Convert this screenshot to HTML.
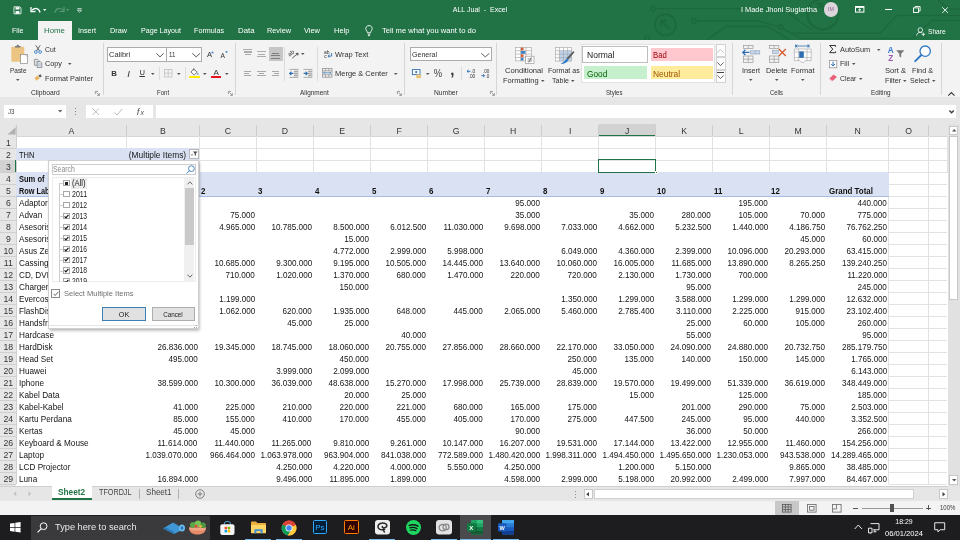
<!DOCTYPE html>
<html lang="en"><head><meta charset="utf-8"><title>ALL Jual - Excel</title>
<style>
html,body{margin:0;padding:0;}
body{width:960px;height:540px;overflow:hidden;position:relative;background:#fff;font-family:"Liberation Sans", sans-serif;}
#root{position:absolute;left:0;top:0;width:960px;height:540px;overflow:hidden;will-change:transform;}
.a{position:absolute;box-sizing:border-box;}
.t{position:absolute;white-space:pre;font-family:"Liberation Sans", sans-serif;}
svg{overflow:visible;}
</style></head><body><div id="root">
<div class="a" style="left:0px;top:0px;width:960px;height:40px;background:#217346;"></div>
<svg class="a" style="left:0px;top:0px;overflow:hidden;" width="960" height="40" viewBox="0 0 960 40"><g fill="none" stroke="#1c693e" stroke-width="1.5" stroke-linejoin="round">
<circle cx="653" cy="8.5" r="2.2"/><path d="M655.3 8.5 H784 L800 22 L812 30"/>
<circle cx="665.4" cy="24.8" r="10.5" stroke-width="2"/>
<path d="M669.5 29 L661.5 21 M661 26.5 V20.5 H667" stroke-width="2.2"/>
<circle cx="694" cy="20.7" r="2.2"/><path d="M696.3 20.7 H757.5 L778.5 26.6"/><circle cx="780.6" cy="27" r="2.2"/><path d="M782.5 28.2 L800 38"/>
<path d="M707 40 L725.6 26.6 H768 L790 40"/>
<circle cx="647" cy="38.5" r="2.2"/>
<circle cx="822.8" cy="14" r="15.5" stroke-width="2.4"/>
<path d="M813 12 L822 4 M816 3.5 H822.5 V10" stroke-width="2.2"/>
<path d="M790 33.2 H880 L897 15.6 H960"/>
<path d="M800 38.6 H912 L932 20.5 H960"/>
<path d="M938 0 L950 9 H960"/>
</g></svg>
<span class="t" id="t1" style="top:5.30px;font-size:7.5px;line-height:10px;color:#fff;left:479.8px;transform-origin:50% 50%;transform:translateX(-50%) scaleX(0.9381);">ALL Jual  -  Excel</span>
<span class="t" id="t2" style="top:4.80px;font-size:7.6px;line-height:10px;color:#fff;left:741px;transform-origin:0 50%;transform:scaleX(0.9730);">I Made Jhoni Sugiartha</span>
<div class="a" style="left:823.6px;top:1.8px;width:14.8px;height:14.8px;background:#dcd6dc;border-radius:50%;"></div>
<span class="t" id="t3" style="top:5.40px;font-size:5.4px;line-height:8px;color:#8c5f96;left:831px;transform-origin:50% 50%;transform:translateX(-50%);">IM</span>
<svg class="a" style="left:13px;top:6px;" width="9" height="8.6" viewBox="0 0 11 11"><path d="M1 1 H8.5 L10 2.5 V10 H1 Z" fill="none" stroke="#fff" stroke-width="1"/><rect x="3" y="1.5" width="5" height="3" fill="#fff"/><rect x="3" y="6.5" width="5" height="3.5" fill="#fff"/></svg>
<svg class="a" style="left:30px;top:5px;" width="12" height="11" viewBox="0 0 12 11"><path d="M2 5 C5 2.5 9 3 10 7.5" fill="none" stroke="#fff" stroke-width="1.3"/><path d="M1 2 V6.5 H5.5" fill="none" stroke="#fff" stroke-width="1.3"/></svg>
<svg class="a" style="left:43px;top:9px;" width="4" height="3" viewBox="0 0 4 3"><path d="M0 0 H3.4 L1.7 2 Z" fill="#fff"/></svg>
<svg class="a" style="left:53px;top:5px;" width="12" height="11" viewBox="0 0 12 11"><path d="M10 5 C7 2.5 3 3 2 7.5" fill="none" stroke="#5d9a78" stroke-width="1.2"/><path d="M11 2 V6.5 H6.5" fill="none" stroke="#5d9a78" stroke-width="1.2"/></svg>
<svg class="a" style="left:66px;top:9px;" width="4" height="3" viewBox="0 0 4 3"><path d="M0 0 H3.4 L1.7 2 Z" fill="#5d9a78"/></svg>
<svg class="a" style="left:77.3px;top:8px;" width="5.4" height="5.4" viewBox="0 0 7 7"><path d="M0.5 0.8 H6" stroke="#fff" stroke-width="0.9"/><path d="M0.5 2.8 H6 L3.25 5.5 Z" fill="none" stroke="#fff" stroke-width="0.9"/></svg>
<svg class="a" style="left:854.6px;top:6.2px;" width="9.4" height="6.6" viewBox="0 0 9.4 6.6"><rect x="0.5" y="0.5" width="8.4" height="5.6" fill="none" stroke="#fff" stroke-width="1"/><rect x="0.5" y="0.5" width="8.4" height="1.4" fill="#fff"/><path d="M4.7 5.6 V3 M3.3 4.2 L4.7 2.8 L6.1 4.2" stroke="#fff" fill="none" stroke-width="0.9"/></svg>
<div class="a" style="left:884.7px;top:9.3px;width:7.7px;height:0.9px;background:#fff;"></div>
<svg class="a" style="left:913.4px;top:6px;" width="7.6" height="7" viewBox="0 0 7.6 7"><rect x="0.5" y="1.9" width="5" height="4.6" fill="none" stroke="#fff" stroke-width="0.9"/><path d="M2.1 1.9 V0.5 H7.1 V5 H5.5" fill="none" stroke="#fff" stroke-width="0.9"/></svg>
<svg class="a" style="left:942.3px;top:6.6px;" width="6.2" height="6.2" viewBox="0 0 6.2 6.2"><path d="M0.3 0.3 L5.9 5.9 M5.9 0.3 L0.3 5.9" stroke="#fff" stroke-width="0.9"/></svg>
<div class="a" style="left:38px;top:21px;width:33.5px;height:19px;background:#f3f3f3;"></div>
<span class="t" id="t4" style="top:26.10px;font-size:7.5px;line-height:10px;color:#fff;left:12px;transform-origin:0 50%;transform:scaleX(0.9509);">File</span>
<span class="t" id="t5" style="top:26.10px;font-size:7.5px;line-height:10px;color:#fff;left:78px;transform-origin:0 50%;transform:scaleX(0.9592);">Insert</span>
<span class="t" id="t6" style="top:26.10px;font-size:7.5px;line-height:10px;color:#fff;left:110px;transform-origin:0 50%;transform:scaleX(0.9706);">Draw</span>
<span class="t" id="t7" style="top:26.10px;font-size:7.5px;line-height:10px;color:#fff;left:140.5px;transform-origin:0 50%;transform:scaleX(0.9496);">Page Layout</span>
<span class="t" id="t8" style="top:26.10px;font-size:7.5px;line-height:10px;color:#fff;left:194px;transform-origin:0 50%;transform:scaleX(0.9595);">Formulas</span>
<span class="t" id="t9" style="top:26.10px;font-size:7.5px;line-height:10px;color:#fff;left:237.5px;transform-origin:0 50%;transform:scaleX(1.0414);">Data</span>
<span class="t" id="t10" style="top:26.10px;font-size:7.5px;line-height:10px;color:#fff;left:267px;transform-origin:0 50%;transform:scaleX(0.9759);">Review</span>
<span class="t" id="t11" style="top:26.10px;font-size:7.5px;line-height:10px;color:#fff;left:304px;transform-origin:0 50%;transform:scaleX(0.9922);">View</span>
<span class="t" id="t12" style="top:26.10px;font-size:7.5px;line-height:10px;color:#fff;left:333.5px;transform-origin:0 50%;transform:scaleX(1.0040);">Help</span>
<span class="t" id="t13" style="top:26.10px;font-size:7.5px;line-height:10px;color:#fff;left:381.5px;transform-origin:0 50%;transform:scaleX(1.0155);">Tell me what you want to do</span>
<span class="t" id="t14" style="top:26.10px;font-size:7.5px;line-height:10px;color:#217346;left:44px;transform-origin:0 50%;transform:scaleX(1.0492);">Home</span>
<svg class="a" style="left:365px;top:25px;" width="8" height="12" viewBox="0 0 8 12"><path d="M4 0.6 C1.8 0.6 0.8 2.2 0.8 3.6 C0.8 5.3 2.3 6 2.5 7.8 H5.5 C5.7 6 7.2 5.3 7.2 3.6 C7.2 2.2 6.2 0.6 4 0.6 Z M2.7 9.2 H5.3 M3 10.6 H5" fill="none" stroke="#fff" stroke-width="0.9"/></svg>
<svg class="a" style="left:916.4px;top:26.8px;" width="10.4" height="9.5" viewBox="0 0 12 11"><circle cx="5" cy="3.5" r="2.6" fill="none" stroke="#fff" stroke-width="0.9"/><path d="M0.8 10 C0.8 7 3 6.3 5 6.3 C6 6.3 6.8 6.5 7.4 6.9" fill="none" stroke="#fff" stroke-width="0.9"/><path d="M8.5 6.5 V10.5 M6.5 8.5 H10.5" stroke="#fff" stroke-width="0.9"/></svg>
<span class="t" id="t15" style="top:26.90px;font-size:7.6px;line-height:10px;color:#fff;left:928.1px;transform-origin:0 50%;transform:scaleX(0.8734);">Share</span>
<div class="a" style="left:0px;top:40px;width:960px;height:57px;background:#f3f3f3;"></div>
<div class="a" style="left:0px;top:97px;width:960px;height:1.2px;background:linear-gradient(#e9e9e9,#e2e2e2);"></div>
<div class="a" style="left:0px;top:97.8px;width:960px;height:27px;background:#e6e6e6;"></div>
<svg class="a" style="left:11px;top:44px;" width="17" height="20" viewBox="0 0 17 20"><rect x="0.3" y="2.8" width="13" height="15" rx="0.8" fill="#ecc583"/><path d="M4 3.4 V2 H5.6 C5.6 0.4 8 0.4 8 2 H9.6 V3.4 Z" fill="#7a7a7a"/><rect x="9.6" y="10.4" width="6.8" height="9.2" fill="#fff" stroke="#8a8a8a" stroke-width="0.7"/><path d="M14 10.4 L16.4 12.8" stroke="#8a8a8a" stroke-width="0.6"/></svg>
<span class="t" id="t16" style="top:64.90px;font-size:7.7px;line-height:11px;color:#303030;left:9.7px;transform-origin:0 50%;transform:scaleX(0.8388);">Paste</span>
<svg class="a" style="left:16.2px;top:79.3px;" width="3.6" height="2.2" viewBox="0 0 3.6 2.2"><path d="M0 0 H3.6 L1.8 2.1 Z" fill="#555"/></svg>
<svg class="a" style="left:33.5px;top:44.8px;" width="8" height="9" viewBox="0 0 8 9"><path d="M1.8 0.3 L5.6 6 M6.2 0.3 L2.4 6" stroke="#555" stroke-width="0.9"/><circle cx="1.9" cy="7" r="1.4" fill="none" stroke="#3f84c5" stroke-width="0.9"/><circle cx="6.1" cy="7" r="1.4" fill="none" stroke="#3f84c5" stroke-width="0.9"/></svg>
<span class="t" id="t17" style="top:43.90px;font-size:7.7px;line-height:11px;color:#303030;left:45px;transform-origin:0 50%;transform:scaleX(0.8856);">Cut</span>
<svg class="a" style="left:33.5px;top:58.8px;" width="8.5" height="9" viewBox="0 0 8.5 9"><path d="M0.4 0.4 H3.6 L5 1.8 V6.2 H0.4 Z" fill="#e6ebf1" stroke="#767676" stroke-width="0.7"/><path d="M1.4 2.4 H3.6 M1.4 4 H2.6" stroke="#8a9bb0" stroke-width="0.5"/><path d="M3.2 2.6 H6.4 L7.8 4 V8.5 H3.2 Z" fill="#dce5ef" stroke="#767676" stroke-width="0.7"/><path d="M4.2 5 H6.8 M4.2 6.4 H6.8" stroke="#8a9bb0" stroke-width="0.5"/></svg>
<span class="t" id="t18" style="top:58.30px;font-size:7.7px;line-height:11px;color:#303030;left:45px;transform-origin:0 50%;transform:scaleX(0.9469);">Copy</span>
<svg class="a" style="left:68.2px;top:62.8px;" width="3.6" height="2.2" viewBox="0 0 3.6 2.2"><path d="M0 0 H3.6 L1.8 2.1 Z" fill="#555"/></svg>
<svg class="a" style="left:34px;top:74.3px;" width="8.5" height="7.5" viewBox="0 0 8.5 7.5"><path d="M0.5 4 L3.8 1.6 L5.6 4.2 L2.4 6.8 Z" fill="#e9b65f"/><path d="M4.4 1.6 L6.4 0.3 L7.8 2.2 L5.9 3.6 Z" fill="#555"/></svg>
<span class="t" id="t19" style="top:72.60px;font-size:7.7px;line-height:11px;color:#303030;left:45px;transform-origin:0 50%;transform:scaleX(0.9460);">Format Painter</span>
<span class="t" id="t20" style="top:87.00px;font-size:7.7px;line-height:11px;color:#303030;left:31.2px;transform-origin:0 50%;transform:scaleX(0.8752);">Clipboard</span>
<svg class="a" style="left:95.2px;top:90.6px;" width="5" height="5" viewBox="0 0 5 5"><path d="M0.4 3 V0.4 H3" fill="none" stroke="#777" stroke-width="0.7"/><path d="M1.6 1.6 L4.2 4.2 M4.4 2.2 V4.4 H2.2" fill="none" stroke="#777" stroke-width="0.7"/></svg>
<div class="a" style="left:102.5px;top:43px;width:0.8px;height:51.5px;background:#d6d6d6;"></div>
<div class="a" style="left:107.3px;top:47px;width:59.3px;height:14.6px;background:#fff;border:0.7px solid #ababab;"></div>
<div class="a" style="left:166.2px;top:47px;width:36.3px;height:14.6px;background:#fff;border:0.7px solid #ababab;"></div>
<span class="t" id="t21" style="top:48.80px;font-size:7.7px;line-height:11px;color:#303030;left:109px;transform-origin:0 50%;transform:scaleX(0.9772);">Calibri</span>
<svg class="a" style="left:156px;top:52.8px;" width="8" height="4.200000000000003" viewBox="0 0 8 4.200000000000003"><path d="M0.3 0.3 L4.0 3.900000000000003 L7.7 0.3" fill="none" stroke="#444" stroke-width="0.9"/></svg>
<span class="t" id="t22" style="top:48.80px;font-size:7.7px;line-height:11px;color:#303030;left:168.8px;transform-origin:0 50%;transform:scaleX(0.8016);">11</span>
<svg class="a" style="left:192px;top:52.8px;" width="8.400000000000006" height="4.200000000000003" viewBox="0 0 8.400000000000006 4.200000000000003"><path d="M0.3 0.3 L4.200000000000003 3.900000000000003 L8.100000000000005 0.3" fill="none" stroke="#444" stroke-width="0.9"/></svg>
<span class="t" id="t23" style="top:49.60px;font-size:7.6px;line-height:10px;color:#303030;left:207px;transform-origin:0 50%;">A</span>
<svg class="a" style="left:211.4px;top:50.6px;" width="3" height="2.4" viewBox="0 0 3 2.4"><path d="M0 2.2 L1.5 0.2 L3 2.2 Z" fill="#3f84c5"/></svg>
<span class="t" id="t24" style="top:50.50px;font-size:6.6px;line-height:9px;color:#303030;left:220.6px;transform-origin:0 50%;">A</span>
<svg class="a" style="left:224.6px;top:50.8px;" width="3" height="2.4" viewBox="0 0 3 2.4"><path d="M0 0.2 L1.5 2.2 L3 0.2 Z" fill="#3f84c5"/></svg>
<span class="t" id="t25" style="top:68.10px;font-size:7.8px;line-height:11px;color:#333;font-weight:bold;left:114px;transform-origin:50% 50%;transform:translateX(-50%);">B</span>
<span class="t" id="t26" style="top:66.90px;font-size:9.6px;line-height:13px;color:#333;font-style:italic;left:128.6px;transform-origin:50% 50%;transform:translateX(-50%);font-family:"Liberation Serif",serif;font-weight:bold;-webkit-text-stroke:0.3px #333;">I</span>
<span class="t" id="t27" style="top:68.40px;font-size:7.6px;line-height:10px;color:#333;left:142.2px;transform-origin:50% 50%;transform:translateX(-50%);text-decoration:underline;">U</span>
<svg class="a" style="left:151.2px;top:72.8px;" width="3.6" height="2.2" viewBox="0 0 3.6 2.2"><path d="M0 0 H3.6 L1.8 2.1 Z" fill="#555"/></svg>
<div class="a" style="left:159.3px;top:67px;width:0.8px;height:13px;background:#dcdcdc;"></div>
<svg class="a" style="left:164.2px;top:69.3px;" width="8.4" height="8.4" viewBox="0 0 8.4 8.4"><g fill="none" stroke="#c1c1c1" stroke-width="0.8"><rect x="0.4" y="0.4" width="7.6" height="7.6"/><path d="M4.2 0.4 V8 M0.4 4.2 H8"/></g></svg>
<svg class="a" style="left:177.0px;top:72.8px;" width="3.6" height="2.2" viewBox="0 0 3.6 2.2"><path d="M0 0 H3.6 L1.8 2.1 Z" fill="#555"/></svg>
<div class="a" style="left:185.2px;top:67px;width:0.8px;height:13px;background:#dcdcdc;"></div>
<svg class="a" style="left:190.3px;top:68.2px;" width="9.5" height="7.5" viewBox="0 0 9.5 7.5"><path d="M3.6 1 L7.2 4.2 L4.2 7 L1 4 Z" fill="#fff" stroke="#555" stroke-width="0.8"/><path d="M3.8 2.6 V0.2" stroke="#555" stroke-width="0.7"/><path d="M7.8 4.4 C8.8 5.8 8.8 6.8 7.9 6.8 C7 6.8 7 5.8 7.8 4.4 Z" fill="#3f84c5"/></svg>
<div class="a" style="left:189.3px;top:75.8px;width:10.7px;height:2.4px;background:#ffeb00;"></div>
<svg class="a" style="left:203.2px;top:72.8px;" width="3.6" height="2.2" viewBox="0 0 3.6 2.2"><path d="M0 0 H3.6 L1.8 2.1 Z" fill="#555"/></svg>
<span class="t" id="t28" style="top:66.80px;font-size:8px;line-height:11px;color:#333;left:216.2px;transform-origin:50% 50%;transform:translateX(-50%);">A</span>
<div class="a" style="left:211px;top:75.8px;width:10px;height:2.4px;background:#e81123;"></div>
<svg class="a" style="left:224.79999999999998px;top:72.8px;" width="3.6" height="2.2" viewBox="0 0 3.6 2.2"><path d="M0 0 H3.6 L1.8 2.1 Z" fill="#555"/></svg>
<span class="t" id="t29" style="top:87.00px;font-size:7.7px;line-height:11px;color:#303030;left:157.2px;transform-origin:0 50%;transform:scaleX(0.7862);">Font</span>
<svg class="a" style="left:228.3px;top:90.6px;" width="5" height="5" viewBox="0 0 5 5"><path d="M0.4 3 V0.4 H3" fill="none" stroke="#777" stroke-width="0.7"/><path d="M1.6 1.6 L4.2 4.2 M4.4 2.2 V4.4 H2.2" fill="none" stroke="#777" stroke-width="0.7"/></svg>
<div class="a" style="left:235.4px;top:43px;width:0.8px;height:51.5px;background:#d6d6d6;"></div>
<div class="a" style="left:243.0px;top:49.3px;width:9px;height:1.15px;background:#acacac;"></div>
<div class="a" style="left:243.5px;top:51.4px;width:8px;height:1.15px;background:#acacac;"></div>
<div class="a" style="left:244.5px;top:53.5px;width:6px;height:1.15px;background:#acacac;"></div>
<div class="a" style="left:256.8px;top:51.2px;width:9.2px;height:1.15px;background:#acacac;"></div>
<div class="a" style="left:258.2px;top:53.5px;width:6.4px;height:1.15px;background:#acacac;"></div>
<div class="a" style="left:256.8px;top:55.800000000000004px;width:9.2px;height:1.15px;background:#acacac;"></div>
<div class="a" style="left:268.5px;top:47.1px;width:14.1px;height:14.1px;background:#c6c6c6;"></div>
<div class="a" style="left:272.4px;top:53.1px;width:6.4px;height:1.15px;background:#7e7e7e;"></div>
<div class="a" style="left:271.0px;top:55.300000000000004px;width:9.2px;height:1.15px;background:#7e7e7e;"></div>
<div class="a" style="left:271.0px;top:57.5px;width:9.2px;height:1.15px;background:#7e7e7e;"></div>
<div class="a" style="left:284.4px;top:47px;width:0.8px;height:33.5px;background:#dcdcdc;"></div>
<svg class="a" style="left:289px;top:50px;" width="9.6" height="8.4" viewBox="0 0 9.6 8.4"><text x="0.2" y="5.6" font-size="6" fill="#3a3a3a" font-family="Liberation Sans, sans-serif" transform="rotate(-38 2 5.6)">ab</text><path d="M3.2 8.2 L9 3.4 M9.2 3.2 L6.8 3.5 M9.2 3.2 L8.7 5.6" stroke="#3a3a3a" stroke-width="0.8" fill="none"/></svg>
<svg class="a" style="left:301.4px;top:53px;" width="3.6" height="2.2" viewBox="0 0 3.6 2.2"><path d="M0 0 H3.6 L1.8 2.1 Z" fill="#555"/></svg>
<div class="a" style="left:244px;top:70.8px;width:7px;height:1.15px;background:#a8a8a8;"></div>
<div class="a" style="left:244px;top:72.85px;width:5.2px;height:1.15px;background:#a8a8a8;"></div>
<div class="a" style="left:244px;top:74.89999999999999px;width:7px;height:1.15px;background:#a8a8a8;"></div>
<div class="a" style="left:257.4px;top:70.8px;width:8.4px;height:1.15px;background:#a8a8a8;"></div>
<div class="a" style="left:258.9px;top:72.85px;width:5.4px;height:1.15px;background:#a8a8a8;"></div>
<div class="a" style="left:257.4px;top:74.89999999999999px;width:8.4px;height:1.15px;background:#a8a8a8;"></div>
<div class="a" style="left:271.8px;top:70.8px;width:7px;height:1.15px;background:#a8a8a8;"></div>
<div class="a" style="left:273.6px;top:72.85px;width:5.2px;height:1.15px;background:#a8a8a8;"></div>
<div class="a" style="left:271.8px;top:74.89999999999999px;width:7px;height:1.15px;background:#a8a8a8;"></div>
<svg class="a" style="left:289px;top:69.2px;" width="9.6" height="8.8" viewBox="0 0 9.6 8.8"><rect x="5" y="0.6" width="4.2" height="7.6" fill="#d9d9d9"/><g stroke="#9a9a9a" stroke-width="0.8"><path d="M0.4 0.4 H9.4 M0.4 8.4 H9.4 M5 2.6 H9.4 M5 4.6 H9.4 M5 6.4 H9.4"/></g><path d="M4.4 4.4 H0.8 M2.4 2.6 L0.6 4.4 L2.4 6.2" fill="none" stroke="#2f6fb0" stroke-width="1.1"/></svg>
<svg class="a" style="left:303.1px;top:69.2px;" width="9.6" height="8.8" viewBox="0 0 9.6 8.8"><rect x="5" y="0.6" width="4.2" height="7.6" fill="#d9d9d9"/><g stroke="#9a9a9a" stroke-width="0.8"><path d="M0.4 0.4 H9.4 M0.4 8.4 H9.4 M5 2.6 H9.4 M5 4.6 H9.4 M5 6.4 H9.4"/></g><path d="M0.6 4.4 H4.2 M2.6 2.6 L4.4 4.4 L2.6 6.2" fill="none" stroke="#2f6fb0" stroke-width="1.1"/></svg>
<div class="a" style="left:317.1px;top:47px;width:0.8px;height:33.5px;background:#dcdcdc;"></div>
<svg class="a" style="left:323.6px;top:50.2px;" width="8.4" height="8" viewBox="0 0 8.4 8"><text x="0" y="3.7" font-size="5" fill="#333" font-family="Liberation Sans, sans-serif">ab</text><text x="0.2" y="7.9" font-size="5" fill="#333" font-family="Liberation Sans, sans-serif">c</text><path d="M7.6 3 V6.1 H4 M5.5 4.7 L3.9 6.1 L5.5 7.5" fill="none" stroke="#2f6fb0" stroke-width="0.9"/></svg>
<span class="t" id="t30" style="top:48.70px;font-size:7.7px;line-height:11px;color:#303030;left:334.5px;transform-origin:0 50%;transform:scaleX(0.9701);">Wrap Text</span>
<svg class="a" style="left:321.8px;top:68.4px;" width="10.4" height="9.6" viewBox="0 0 10.4 9.6"><g fill="none" stroke="#8a8a8a" stroke-width="0.7"><rect x="0.4" y="0.4" width="9.6" height="8.8"/><path d="M0.4 2.8 H10 M0.4 6.8 H10 M3.6 0.4 V2.8 M6.8 0.4 V2.8 M3.6 6.8 V9.2 M6.8 6.8 V9.2"/></g><path d="M1.6 4.8 H8.8 M2.8 3.8 L1.6 4.8 L2.8 5.8 M7.6 3.8 L8.8 4.8 L7.6 5.8" fill="none" stroke="#2f6fb0" stroke-width="0.7"/></svg>
<span class="t" id="t31" style="top:68.10px;font-size:7.7px;line-height:11px;color:#303030;left:334.5px;transform-origin:0 50%;transform:scaleX(0.9730);">Merge &amp; Center</span>
<svg class="a" style="left:393.5px;top:72.8px;" width="3.6" height="2.2" viewBox="0 0 3.6 2.2"><path d="M0 0 H3.6 L1.8 2.1 Z" fill="#555"/></svg>
<span class="t" id="t32" style="top:87.00px;font-size:7.7px;line-height:11px;color:#303030;left:300.2px;transform-origin:0 50%;transform:scaleX(0.8395);">Alignment</span>
<svg class="a" style="left:397px;top:90.6px;" width="5" height="5" viewBox="0 0 5 5"><path d="M0.4 3 V0.4 H3" fill="none" stroke="#777" stroke-width="0.7"/><path d="M1.6 1.6 L4.2 4.2 M4.4 2.2 V4.4 H2.2" fill="none" stroke="#777" stroke-width="0.7"/></svg>
<div class="a" style="left:404.2px;top:43px;width:0.8px;height:51.5px;background:#d6d6d6;"></div>
<div class="a" style="left:409.9px;top:47.2px;width:81.8px;height:14.2px;background:#fff;border:0.7px solid #ababab;"></div>
<span class="t" id="t33" style="top:48.80px;font-size:7.7px;line-height:11px;color:#303030;left:411.9px;transform-origin:0 50%;transform:scaleX(0.9174);">General</span>
<svg class="a" style="left:481.2px;top:52.8px;" width="8.600000000000023" height="4.200000000000003" viewBox="0 0 8.600000000000023 4.200000000000003"><path d="M0.3 0.3 L4.300000000000011 3.900000000000003 L8.300000000000022 0.3" fill="none" stroke="#444" stroke-width="0.9"/></svg>
<svg class="a" style="left:411.9px;top:68.7px;" width="10" height="10" viewBox="0 0 10 10"><rect x="0.4" y="0.6" width="7.6" height="5" fill="#fff" stroke="#2f6fb0" stroke-width="0.9"/><circle cx="4.2" cy="3.1" r="1.1" fill="#2f6fb0"/><ellipse cx="6.6" cy="8" rx="2.6" ry="1.2" fill="#e9c46f"/><ellipse cx="6.6" cy="6.6" rx="2.6" ry="1.2" fill="#f0d591" stroke="#caa24a" stroke-width="0.3"/></svg>
<svg class="a" style="left:425.5px;top:72.8px;" width="3.6" height="2.2" viewBox="0 0 3.6 2.2"><path d="M0 0 H3.6 L1.8 2.1 Z" fill="#555"/></svg>
<span class="t" id="t34" style="top:66.50px;font-size:10.4px;line-height:14px;color:#444;left:438.3px;transform-origin:50% 50%;transform:translateX(-50%) scaleX(0.9081);">%</span>
<span class="t" id="t35" style="top:59.60px;font-size:15px;line-height:20px;color:#333;font-weight:bold;left:452.3px;transform-origin:50% 50%;transform:translateX(-50%);">,</span>
<div class="a" style="left:461.2px;top:67px;width:0.8px;height:13px;background:#dcdcdc;"></div>
<svg class="a" style="left:466.4px;top:69.2px;" width="10" height="9" viewBox="0 0 10 9"><text x="5.3" y="3.7" font-size="4.5" fill="#333" font-family="Liberation Sans, sans-serif" textLength="4" lengthAdjust="spacingAndGlyphs">.0</text><text x="2.6" y="8.5" font-size="4.5" fill="#333" font-family="Liberation Sans, sans-serif" textLength="6.7" lengthAdjust="spacingAndGlyphs">.00</text><path d="M4.4 2.3 H1.2 M2.5 0.9 L1 2.3 L2.5 3.7" fill="none" stroke="#2f6fb0" stroke-width="1"/></svg>
<svg class="a" style="left:480.6px;top:69.2px;" width="10" height="9" viewBox="0 0 10 9"><text x="2.1" y="3.7" font-size="4.5" fill="#333" font-family="Liberation Sans, sans-serif" textLength="6.3" lengthAdjust="spacingAndGlyphs">.00</text><text x="4.6" y="8.5" font-size="4.5" fill="#333" font-family="Liberation Sans, sans-serif" textLength="3.8" lengthAdjust="spacingAndGlyphs">.0</text><path d="M0.4 6.7 H3.4 M2.1 5.3 L3.6 6.7 L2.1 8.1" fill="none" stroke="#2f6fb0" stroke-width="1"/></svg>
<span class="t" id="t36" style="top:87.00px;font-size:7.7px;line-height:11px;color:#303030;left:433.6px;transform-origin:0 50%;transform:scaleX(0.8704);">Number</span>
<svg class="a" style="left:489.6px;top:90.6px;" width="5" height="5" viewBox="0 0 5 5"><path d="M0.4 3 V0.4 H3" fill="none" stroke="#777" stroke-width="0.7"/><path d="M1.6 1.6 L4.2 4.2 M4.4 2.2 V4.4 H2.2" fill="none" stroke="#777" stroke-width="0.7"/></svg>
<div class="a" style="left:496.2px;top:43px;width:0.8px;height:51.5px;background:#d6d6d6;"></div>
<svg class="a" style="left:515.4px;top:46.8px;" width="19.5" height="17.2" viewBox="0 0 19.5 17.2"><rect x="0.3" y="0.3" width="16" height="13.6" fill="#fdfdfd"/><g fill="none" stroke="#a2a2a2" stroke-width="0.6"><rect x="0.3" y="0.3" width="16" height="13.6"/><path d="M0.3 3.7 H16.3 M0.3 7.1 H16.3 M0.3 10.5 H16.3 M5.6 0.3 V13.9 M11 0.3 V13.9"/></g><rect x="5.9" y="0.6" width="2.6" height="2.8" fill="#d65a35"/><rect x="5.9" y="4" width="4.6" height="2.8" fill="#3f84c5"/><rect x="5.9" y="7.4" width="2.6" height="2.8" fill="#d65a35"/><rect x="5.9" y="10.8" width="2.6" height="2.8" fill="#3f84c5"/><rect x="10.6" y="9.2" width="8.4" height="7.4" fill="#fff" stroke="#8a8a8a" stroke-width="0.6"/><path d="M12.6 12 H17.2 M12.6 14 H17.2 M16.4 10.4 L13.6 15.6" stroke="#444" stroke-width="0.6"/></svg>
<span class="t" id="t37" style="top:64.80px;font-size:7.7px;line-height:11px;color:#303030;left:504.5px;transform-origin:0 50%;transform:scaleX(0.9878);">Conditional</span>
<span class="t" id="t38" style="top:75.00px;font-size:7.7px;line-height:11px;color:#303030;left:503px;transform-origin:0 50%;transform:scaleX(0.9687);">Formatting</span>
<svg class="a" style="left:541.2px;top:79.9px;" width="3.6" height="2.2" viewBox="0 0 3.6 2.2"><path d="M0 0 H3.6 L1.8 2.1 Z" fill="#555"/></svg>
<svg class="a" style="left:554.8px;top:46.6px;" width="19.6" height="17.6" viewBox="0 0 19.6 17.6"><rect x="0.3" y="0.3" width="16.4" height="13.8" fill="#fdfdfd"/><rect x="4.4" y="3.7" width="12.3" height="10.4" fill="#bed3ec"/><g fill="none" stroke="#a2a2a2" stroke-width="0.6"><rect x="0.3" y="0.3" width="16.4" height="13.8"/><path d="M0.3 3.7 H16.7 M0.3 7.2 H16.7 M0.3 10.7 H16.7 M4.4 0.3 V14.1 M8.5 0.3 V14.1 M12.6 0.3 V14.1"/></g><path d="M18.3 4 L19.4 5.2 L13.4 12.6 L11.6 11.2 Z" fill="#5d5d5d"/><path d="M11.6 11.2 L13.4 12.6 C12.6 16 8.6 17.4 5.6 16.8 C8.2 15.6 10.4 13.8 11.6 11.2 Z" fill="#2f7cc8"/></svg>
<span class="t" id="t39" style="top:64.80px;font-size:7.7px;line-height:11px;color:#303030;left:547.5px;transform-origin:0 50%;transform:scaleX(0.9159);">Format as</span>
<span class="t" id="t40" style="top:75.00px;font-size:7.7px;line-height:11px;color:#303030;left:552.4px;transform-origin:0 50%;transform:scaleX(0.9189);">Table</span>
<svg class="a" style="left:571.4000000000001px;top:79.9px;" width="3.6" height="2.2" viewBox="0 0 3.6 2.2"><path d="M0 0 H3.6 L1.8 2.1 Z" fill="#555"/></svg>
<div class="a" style="left:581.2px;top:44.4px;width:133.8px;height:38.2px;background:#fff;border:0.6px solid #e1e1e1;"></div>
<div class="a" style="left:582.4px;top:46.2px;width:65.6px;height:16.5px;background:#fff;border:1.3px solid #bdbdbd;"></div>
<span class="t" id="t41" style="top:49.20px;font-size:8.5px;line-height:12px;color:#1a1a1a;left:586.5px;transform-origin:0 50%;transform:scaleX(1.0034);">Normal</span>
<div class="a" style="left:650.8px;top:48px;width:62.2px;height:13px;background:#ffc7ce;"></div>
<span class="t" id="t42" style="top:49.20px;font-size:8.5px;line-height:12px;color:#9c0006;left:653.3px;transform-origin:0 50%;transform:scaleX(0.9058);">Bad</span>
<div class="a" style="left:583.9px;top:66.2px;width:62.8px;height:13px;background:#c6efce;"></div>
<span class="t" id="t43" style="top:67.50px;font-size:8.5px;line-height:12px;color:#006100;left:586.5px;transform-origin:0 50%;transform:scaleX(0.9809);">Good</span>
<div class="a" style="left:650.8px;top:66.2px;width:62.2px;height:13px;background:#ffeb9c;"></div>
<span class="t" id="t44" style="top:67.50px;font-size:8.5px;line-height:12px;color:#9c5700;left:653.3px;transform-origin:0 50%;transform:scaleX(0.9888);">Neutral</span>
<div class="a" style="left:715.8px;top:44.4px;width:9.8px;height:12.9px;background:#fdfdfd;border:0.6px solid #d2d2d2;"></div>
<div class="a" style="left:715.8px;top:57.3px;width:9.8px;height:12.7px;background:#fdfdfd;border:0.6px solid #d2d2d2;"></div>
<div class="a" style="left:715.8px;top:70px;width:9.8px;height:12.6px;background:#fdfdfd;border:0.6px solid #d2d2d2;"></div>
<svg class="a" style="left:717.2px;top:48.5px;" width="7" height="4" viewBox="0 0 7 4"><path d="M0.3 3.6 L3.5 0.5 L6.7 3.6" fill="none" stroke="#b5b5b5" stroke-width="0.8"/></svg>
<svg class="a" style="left:717.2px;top:61.6px;" width="7" height="4" viewBox="0 0 7 4"><path d="M0.3 0.4 L3.5 3.5 L6.7 0.4" fill="none" stroke="#444" stroke-width="0.8"/></svg>
<div class="a" style="left:717.3px;top:72.3px;width:6.8px;height:0.8px;background:#444;"></div>
<svg class="a" style="left:717.2px;top:75px;" width="7" height="4" viewBox="0 0 7 4"><path d="M0.3 0.4 L3.5 3.5 L6.7 0.4" fill="none" stroke="#444" stroke-width="0.8"/></svg>
<span class="t" id="t45" style="top:87.00px;font-size:7.7px;line-height:11px;color:#303030;left:606px;transform-origin:0 50%;transform:scaleX(0.7881);">Styles</span>
<div class="a" style="left:732.2px;top:43px;width:0.8px;height:51.5px;background:#d6d6d6;"></div>
<svg class="a" style="left:741.7px;top:45px;" width="18.2" height="18" viewBox="0 0 18.2 18"><g fill="none" stroke="#9a9a9a" stroke-width="0.7"><rect x="1.6" y="0.4" width="9.4" height="3"/><path d="M6.3 0.4 V3.4"/><rect x="1.6" y="11" width="9.4" height="6.4"/><path d="M6.3 11 V17.4 M1.6 14.2 H11"/></g><rect x="8.6" y="5.8" width="9.2" height="3.2" fill="#c9d9ec" stroke="#8a9db5" stroke-width="0.6"/><path d="M13.2 5.8 V9" stroke="#8a9db5" stroke-width="0.6"/><path d="M7.4 7.4 H0.8 M3.4 4.8 L0.8 7.4 L3.4 10" fill="none" stroke="#2f6fb0" stroke-width="1.3"/></svg>
<span class="t" id="t46" style="top:64.70px;font-size:7.7px;line-height:11px;color:#303030;left:742px;transform-origin:0 50%;transform:scaleX(0.9358);">Insert</span>
<svg class="a" style="left:749.1px;top:79.2px;" width="3.6" height="2.2" viewBox="0 0 3.6 2.2"><path d="M0 0 H3.6 L1.8 2.1 Z" fill="#555"/></svg>
<svg class="a" style="left:768.9px;top:45px;" width="18" height="18" viewBox="0 0 18 18"><g fill="none" stroke="#9a9a9a" stroke-width="0.7"><rect x="0.4" y="0.4" width="9.4" height="3"/><path d="M5.1 0.4 V3.4"/><rect x="0.4" y="11" width="9.4" height="6.4"/><path d="M5.1 11 V17.4 M0.4 14.2 H9.8"/></g><rect x="3.6" y="5.6" width="5.6" height="3" fill="#c9d9ec" stroke="#8a9db5" stroke-width="0.6"/><path d="M9.8 4 L16.8 11 M16.8 4 L9.8 11" stroke="#d4572a" stroke-width="1.2"/></svg>
<span class="t" id="t47" style="top:64.70px;font-size:7.7px;line-height:11px;color:#303030;left:766.4px;transform-origin:0 50%;transform:scaleX(0.9625);">Delete</span>
<svg class="a" style="left:775.4000000000001px;top:79.2px;" width="3.6" height="2.2" viewBox="0 0 3.6 2.2"><path d="M0 0 H3.6 L1.8 2.1 Z" fill="#555"/></svg>
<svg class="a" style="left:794.2px;top:44.4px;" width="17.6" height="19" viewBox="0 0 17.6 19"><path d="M1.6 2 H15 M1.6 0.4 V3.6 M15 0.4 V3.6 M3.4 0.8 L1.8 2 L3.4 3.2 M13.2 0.8 L14.8 2 L13.2 3.2" fill="none" stroke="#2f6fb0" stroke-width="0.8"/><path d="M0.4 5 H17.2 V16.6 H11.4 L10 18.4 H7.4 L6 16.6 H0.4 Z" fill="#fcfcfc"/><g fill="none" stroke="#a5a5a5" stroke-width="0.6"><path d="M0.4 5 H17.2 V16.6 H11.4 L10 18.4 H7.4 L6 16.6 H0.4 Z"/><path d="M0.4 8 H17.2 M0.4 13.6 H17.2 M4.6 5 V16.6 M13 5 V16.6"/></g><rect x="5.2" y="7.4" width="4.6" height="6.4" fill="#2f6fb0"/></svg>
<span class="t" id="t48" style="top:64.70px;font-size:7.7px;line-height:11px;color:#303030;left:790.9px;transform-origin:0 50%;transform:scaleX(0.9647);">Format</span>
<svg class="a" style="left:801.0px;top:79.2px;" width="3.6" height="2.2" viewBox="0 0 3.6 2.2"><path d="M0 0 H3.6 L1.8 2.1 Z" fill="#555"/></svg>
<span class="t" id="t49" style="top:87.00px;font-size:7.7px;line-height:11px;color:#303030;left:769.8px;transform-origin:0 50%;transform:scaleX(0.7605);">Cells</span>
<div class="a" style="left:820.4px;top:43px;width:0.8px;height:51.5px;background:#d6d6d6;"></div>
<svg class="a" style="left:829px;top:45.1px;" width="7" height="8.2" viewBox="0 0 7 8.2"><path d="M6.6 1.8 V0.5 H0.6 L3.8 4.1 L0.6 7.7 H6.6 V6.4" fill="none" stroke="#333" stroke-width="1"/></svg>
<span class="t" id="t50" style="top:44.00px;font-size:7.7px;line-height:11px;color:#303030;left:840.1px;transform-origin:0 50%;transform:scaleX(0.9549);">AutoSum</span>
<svg class="a" style="left:876.5px;top:48.8px;" width="3.6" height="2.2" viewBox="0 0 3.6 2.2"><path d="M0 0 H3.6 L1.8 2.1 Z" fill="#555"/></svg>
<svg class="a" style="left:828.8px;top:59.7px;" width="8.2" height="8.2" viewBox="0 0 8.2 8.2"><rect x="0.4" y="0.4" width="7.4" height="7.4" fill="#fff" stroke="#8a8a8a" stroke-width="0.7"/><path d="M4.1 1.6 V5.8 M2.2 4 L4.1 6 L6 4" fill="none" stroke="#2f6fb0" stroke-width="1"/></svg>
<span class="t" id="t51" style="top:58.20px;font-size:7.7px;line-height:11px;color:#303030;left:840.1px;transform-origin:0 50%;transform:scaleX(0.9259);">Fill</span>
<svg class="a" style="left:851.5px;top:63px;" width="3.6" height="2.2" viewBox="0 0 3.6 2.2"><path d="M0 0 H3.6 L1.8 2.1 Z" fill="#555"/></svg>
<svg class="a" style="left:829px;top:74.3px;" width="8.4" height="7.4" viewBox="0 0 8.4 7.4"><path d="M4.6 0.4 L8 3 L3.6 7 L0.4 4.6 Z" fill="#e8637a"/><path d="M0.4 4.6 L3.6 7 L2.6 7.2 L0.2 5.4 Z" fill="#f4b6c0"/></svg>
<span class="t" id="t52" style="top:72.90px;font-size:7.7px;line-height:11px;color:#303030;left:840.1px;transform-origin:0 50%;transform:scaleX(0.8925);">Clear</span>
<svg class="a" style="left:858.7px;top:77.7px;" width="3.6" height="2.2" viewBox="0 0 3.6 2.2"><path d="M0 0 H3.6 L1.8 2.1 Z" fill="#555"/></svg>
<span class="t" id="t53" style="top:44.50px;font-size:8.2px;line-height:11px;color:#2f78c4;font-weight:bold;left:890.7px;transform-origin:50% 50%;transform:translateX(-50%);">A</span>
<span class="t" id="t54" style="top:52.60px;font-size:8.2px;line-height:11px;color:#9b59b6;font-weight:bold;left:890.7px;transform-origin:50% 50%;transform:translateX(-50%);">Z</span>
<svg class="a" style="left:895.8px;top:49.8px;" width="8.6" height="8" viewBox="0 0 8.6 8"><path d="M0.2 0.3 H8.4 L5.2 3.8 V7.6 L3.4 6.6 V3.8 Z" fill="#777"/></svg>
<span class="t" id="t55" style="top:64.80px;font-size:7.7px;line-height:11px;color:#303030;left:884.9px;transform-origin:0 50%;transform:scaleX(0.9871);">Sort &amp;</span>
<span class="t" id="t56" style="top:75.00px;font-size:7.7px;line-height:11px;color:#303030;left:884.9px;transform-origin:0 50%;transform:scaleX(0.9419);">Filter</span>
<svg class="a" style="left:903.2px;top:79.9px;" width="3.6" height="2.2" viewBox="0 0 3.6 2.2"><path d="M0 0 H3.6 L1.8 2.1 Z" fill="#555"/></svg>
<svg class="a" style="left:914px;top:45.4px;" width="18" height="17.6" viewBox="0 0 18 17.6"><circle cx="11.2" cy="6.2" r="5.2" fill="#fdfdfd" stroke="#2f78c4" stroke-width="1.3"/><path d="M7.4 10 L1.2 16.2" stroke="#2f78c4" stroke-width="1.9" stroke-linecap="round"/></svg>
<span class="t" id="t57" style="top:64.80px;font-size:7.7px;line-height:11px;color:#303030;left:911.9px;transform-origin:0 50%;transform:scaleX(0.9496);">Find &amp;</span>
<span class="t" id="t58" style="top:75.00px;font-size:7.7px;line-height:11px;color:#303030;left:910.4px;transform-origin:0 50%;transform:scaleX(0.9216);">Select</span>
<svg class="a" style="left:931.7px;top:79.9px;" width="3.6" height="2.2" viewBox="0 0 3.6 2.2"><path d="M0 0 H3.6 L1.8 2.1 Z" fill="#555"/></svg>
<span class="t" id="t59" style="top:87.00px;font-size:7.7px;line-height:11px;color:#303030;left:870.8px;transform-origin:0 50%;transform:scaleX(0.8292);">Editing</span>
<div class="a" style="left:941.2px;top:43px;width:0.8px;height:51.5px;background:#d6d6d6;"></div>
<svg class="a" style="left:948.3px;top:91.6px;" width="7" height="4" viewBox="0 0 7 4"><path d="M0.3 3.6 L3.4 0.5 L6.5 3.6" fill="none" stroke="#3a3a3a" stroke-width="1.15"/></svg>
<div class="a" style="left:4px;top:104.8px;width:61.8px;height:13.7px;background:#fff;"></div>
<span class="t" id="t60" style="top:106.50px;font-size:7.3px;line-height:10px;color:#444;left:8px;transform-origin:0 50%;transform:scaleX(0.8421);">J3</span>
<svg class="a" style="left:58px;top:110px;" width="5" height="3" viewBox="0 0 5 3"><path d="M0 0 H4.4 L2.2 2.6 Z" fill="#666"/></svg>
<div class="a" style="left:75px;top:108px;width:1px;height:1px;background:#8a8a8a;"></div>
<div class="a" style="left:75px;top:111px;width:1px;height:1px;background:#8a8a8a;"></div>
<div class="a" style="left:75px;top:114px;width:1px;height:1px;background:#8a8a8a;"></div>
<div class="a" style="left:85.5px;top:104.8px;width:67.5px;height:13.7px;background:#fff;"></div>
<svg class="a" style="left:92px;top:107.5px;" width="8" height="8" viewBox="0 0 8 8"><path d="M0.5 0.5 L7 7 M7 0.5 L0.5 7" stroke="#b5b5b5" stroke-width="0.9"/></svg>
<svg class="a" style="left:114px;top:107.5px;" width="9" height="8" viewBox="0 0 9 8"><path d="M0.5 4.5 L3 7 L8 1" fill="none" stroke="#b5b5b5" stroke-width="0.9"/></svg>
<span class="t" id="t61" style="top:104.70px;font-size:9.6px;line-height:13px;color:#555;font-style:italic;left:136.8px;transform-origin:0 50%;font-family:"Liberation Serif",serif;">f</span>
<span class="t" id="t62" style="top:107.60px;font-size:7px;line-height:10px;color:#555;font-style:italic;left:140.6px;transform-origin:0 50%;font-family:"Liberation Serif",serif;">x</span>
<div class="a" style="left:156px;top:104.8px;width:800px;height:13.7px;background:#fff;"></div>
<svg class="a" style="left:949.2px;top:109.8px;" width="6" height="4" viewBox="0 0 6 4"><path d="M0.4 0.5 L2.6 2.8 L4.8 0.5" fill="none" stroke="#3a3a3a" stroke-width="1.3"/></svg>
<div class="a" style="left:0px;top:124.3px;width:948px;height:361.6px;background:#fff;"></div>
<div class="a" style="left:0px;top:124.3px;width:948px;height:12px;background:#e6e6e6;"></div>
<div class="a" style="left:0px;top:135.8px;width:948px;height:0.5px;background:#d6d6d6;"></div>
<svg class="a" style="left:6.6px;top:127.3px;" width="9" height="8" viewBox="0 0 9 8"><path d="M8.6 0.2 V7.6 H0.6 Z" fill="#b2b2b2"/></svg>
<span class="t" id="t63" style="top:125.20px;font-size:8.7px;line-height:12px;color:#343434;left:71.35px;transform-origin:50% 50%;transform:translateX(-50%);">A</span>
<div class="a" style="left:126.10000000000001px;top:125.3px;width:1px;height:11px;background:#cdcdcd;"></div>
<span class="t" id="t64" style="top:125.20px;font-size:8.7px;line-height:12px;color:#343434;left:163.0px;transform-origin:50% 50%;transform:translateX(-50%);">B</span>
<div class="a" style="left:198.70000000000002px;top:125.3px;width:1px;height:11px;background:#cdcdcd;"></div>
<span class="t" id="t65" style="top:125.20px;font-size:8.7px;line-height:12px;color:#343434;left:227.85px;transform-origin:50% 50%;transform:translateX(-50%);">C</span>
<div class="a" style="left:255.79999999999998px;top:125.3px;width:1px;height:11px;background:#cdcdcd;"></div>
<span class="t" id="t66" style="top:125.20px;font-size:8.7px;line-height:12px;color:#343434;left:284.95px;transform-origin:50% 50%;transform:translateX(-50%);">D</span>
<div class="a" style="left:312.9px;top:125.3px;width:1px;height:11px;background:#cdcdcd;"></div>
<span class="t" id="t67" style="top:125.20px;font-size:8.7px;line-height:12px;color:#343434;left:342.05px;transform-origin:50% 50%;transform:translateX(-50%);">E</span>
<div class="a" style="left:370.0px;top:125.3px;width:1px;height:11px;background:#cdcdcd;"></div>
<span class="t" id="t68" style="top:125.20px;font-size:8.7px;line-height:12px;color:#343434;left:399.15px;transform-origin:50% 50%;transform:translateX(-50%);">F</span>
<div class="a" style="left:427.09999999999997px;top:125.3px;width:1px;height:11px;background:#cdcdcd;"></div>
<span class="t" id="t69" style="top:125.20px;font-size:8.7px;line-height:12px;color:#343434;left:456.2px;transform-origin:50% 50%;transform:translateX(-50%);">G</span>
<div class="a" style="left:484.09999999999997px;top:125.3px;width:1px;height:11px;background:#cdcdcd;"></div>
<span class="t" id="t70" style="top:125.20px;font-size:8.7px;line-height:12px;color:#343434;left:513.2px;transform-origin:50% 50%;transform:translateX(-50%);">H</span>
<div class="a" style="left:541.1px;top:125.3px;width:1px;height:11px;background:#cdcdcd;"></div>
<span class="t" id="t71" style="top:125.20px;font-size:8.7px;line-height:12px;color:#343434;left:570.2px;transform-origin:50% 50%;transform:translateX(-50%);">I</span>
<div class="a" style="left:598.1px;top:125.3px;width:1px;height:11px;background:#cdcdcd;"></div>
<div class="a" style="left:598.7px;top:124.3px;width:57.0px;height:12px;background:#d2d2d2;"></div>
<div class="a" style="left:598.7px;top:135.3px;width:57.0px;height:1px;background:#217346;"></div>
<span class="t" id="t72" style="top:125.20px;font-size:8.7px;line-height:12px;color:#343434;left:627.2px;transform-origin:50% 50%;transform:translateX(-50%);">J</span>
<div class="a" style="left:655.1px;top:125.3px;width:1px;height:11px;background:#cdcdcd;"></div>
<span class="t" id="t73" style="top:125.20px;font-size:8.7px;line-height:12px;color:#343434;left:684.2px;transform-origin:50% 50%;transform:translateX(-50%);">K</span>
<div class="a" style="left:712.1px;top:125.3px;width:1px;height:11px;background:#cdcdcd;"></div>
<span class="t" id="t74" style="top:125.20px;font-size:8.7px;line-height:12px;color:#343434;left:741.2px;transform-origin:50% 50%;transform:translateX(-50%);">L</span>
<div class="a" style="left:769.1px;top:125.3px;width:1px;height:11px;background:#cdcdcd;"></div>
<span class="t" id="t75" style="top:125.20px;font-size:8.7px;line-height:12px;color:#343434;left:798.2px;transform-origin:50% 50%;transform:translateX(-50%);">M</span>
<div class="a" style="left:826.1px;top:125.3px;width:1px;height:11px;background:#cdcdcd;"></div>
<span class="t" id="t76" style="top:125.20px;font-size:8.7px;line-height:12px;color:#343434;left:857.7px;transform-origin:50% 50%;transform:translateX(-50%);">N</span>
<div class="a" style="left:888.1px;top:125.3px;width:1px;height:11px;background:#cdcdcd;"></div>
<span class="t" id="t77" style="top:125.20px;font-size:8.7px;line-height:12px;color:#343434;left:908.7px;transform-origin:50% 50%;transform:translateX(-50%);">O</span>
<div class="a" style="left:928.1px;top:125.3px;width:1px;height:11px;background:#cdcdcd;"></div>
<div class="a" style="left:15.5px;top:125.3px;width:1px;height:11px;background:#c9c9c9;"></div>
<div class="a" style="left:0px;top:136.3px;width:16.2px;height:349.6px;background:#e6e6e6;"></div>
<div class="a" style="left:15.5px;top:136.3px;width:0.5px;height:348.0px;background:#cfcfcf;"></div>
<span class="t" id="t78" style="top:137.10px;font-size:8.7px;line-height:12px;color:#343434;left:8.3px;transform-origin:50% 50%;transform:translateX(-50%);">1</span>
<div class="a" style="left:0px;top:147.8px;width:16px;height:0.5px;background:#cfcfcf;"></div>
<span class="t" id="t79" style="top:149.10px;font-size:8.7px;line-height:12px;color:#343434;left:8.3px;transform-origin:50% 50%;transform:translateX(-50%);">2</span>
<div class="a" style="left:0px;top:159.8px;width:16px;height:0.5px;background:#cfcfcf;"></div>
<div class="a" style="left:0px;top:160.3px;width:16px;height:12.0px;background:#d2d2d2;"></div>
<div class="a" style="left:15px;top:160.3px;width:1px;height:12.0px;background:#217346;"></div>
<span class="t" id="t80" style="top:161.10px;font-size:8.7px;line-height:12px;color:#343434;left:8.3px;transform-origin:50% 50%;transform:translateX(-50%);">3</span>
<div class="a" style="left:0px;top:171.8px;width:16px;height:0.5px;background:#cfcfcf;"></div>
<span class="t" id="t81" style="top:173.10px;font-size:8.7px;line-height:12px;color:#343434;left:8.3px;transform-origin:50% 50%;transform:translateX(-50%);">4</span>
<div class="a" style="left:0px;top:183.8px;width:16px;height:0.5px;background:#cfcfcf;"></div>
<span class="t" id="t82" style="top:185.10px;font-size:8.7px;line-height:12px;color:#343434;left:8.3px;transform-origin:50% 50%;transform:translateX(-50%);">5</span>
<div class="a" style="left:0px;top:195.8px;width:16px;height:0.5px;background:#cfcfcf;"></div>
<span class="t" id="t83" style="top:197.10px;font-size:8.7px;line-height:12px;color:#343434;left:8.3px;transform-origin:50% 50%;transform:translateX(-50%);">6</span>
<div class="a" style="left:0px;top:207.8px;width:16px;height:0.5px;background:#cfcfcf;"></div>
<span class="t" id="t84" style="top:209.10px;font-size:8.7px;line-height:12px;color:#343434;left:8.3px;transform-origin:50% 50%;transform:translateX(-50%);">7</span>
<div class="a" style="left:0px;top:219.8px;width:16px;height:0.5px;background:#cfcfcf;"></div>
<span class="t" id="t85" style="top:221.10px;font-size:8.7px;line-height:12px;color:#343434;left:8.3px;transform-origin:50% 50%;transform:translateX(-50%);">8</span>
<div class="a" style="left:0px;top:231.8px;width:16px;height:0.5px;background:#cfcfcf;"></div>
<span class="t" id="t86" style="top:233.10px;font-size:8.7px;line-height:12px;color:#343434;left:8.3px;transform-origin:50% 50%;transform:translateX(-50%);">9</span>
<div class="a" style="left:0px;top:243.8px;width:16px;height:0.5px;background:#cfcfcf;"></div>
<span class="t" id="t87" style="top:245.10px;font-size:8.7px;line-height:12px;color:#343434;left:8.3px;transform-origin:50% 50%;transform:translateX(-50%);">10</span>
<div class="a" style="left:0px;top:255.8px;width:16px;height:0.5px;background:#cfcfcf;"></div>
<span class="t" id="t88" style="top:257.10px;font-size:8.7px;line-height:12px;color:#343434;left:8.3px;transform-origin:50% 50%;transform:translateX(-50%);">11</span>
<div class="a" style="left:0px;top:267.8px;width:16px;height:0.5px;background:#cfcfcf;"></div>
<span class="t" id="t89" style="top:269.10px;font-size:8.7px;line-height:12px;color:#343434;left:8.3px;transform-origin:50% 50%;transform:translateX(-50%);">12</span>
<div class="a" style="left:0px;top:279.8px;width:16px;height:0.5px;background:#cfcfcf;"></div>
<span class="t" id="t90" style="top:281.10px;font-size:8.7px;line-height:12px;color:#343434;left:8.3px;transform-origin:50% 50%;transform:translateX(-50%);">13</span>
<div class="a" style="left:0px;top:291.8px;width:16px;height:0.5px;background:#cfcfcf;"></div>
<span class="t" id="t91" style="top:293.10px;font-size:8.7px;line-height:12px;color:#343434;left:8.3px;transform-origin:50% 50%;transform:translateX(-50%);">14</span>
<div class="a" style="left:0px;top:303.8px;width:16px;height:0.5px;background:#cfcfcf;"></div>
<span class="t" id="t92" style="top:305.10px;font-size:8.7px;line-height:12px;color:#343434;left:8.3px;transform-origin:50% 50%;transform:translateX(-50%);">15</span>
<div class="a" style="left:0px;top:315.8px;width:16px;height:0.5px;background:#cfcfcf;"></div>
<span class="t" id="t93" style="top:317.10px;font-size:8.7px;line-height:12px;color:#343434;left:8.3px;transform-origin:50% 50%;transform:translateX(-50%);">16</span>
<div class="a" style="left:0px;top:327.8px;width:16px;height:0.5px;background:#cfcfcf;"></div>
<span class="t" id="t94" style="top:329.10px;font-size:8.7px;line-height:12px;color:#343434;left:8.3px;transform-origin:50% 50%;transform:translateX(-50%);">17</span>
<div class="a" style="left:0px;top:339.8px;width:16px;height:0.5px;background:#cfcfcf;"></div>
<span class="t" id="t95" style="top:341.10px;font-size:8.7px;line-height:12px;color:#343434;left:8.3px;transform-origin:50% 50%;transform:translateX(-50%);">18</span>
<div class="a" style="left:0px;top:351.8px;width:16px;height:0.5px;background:#cfcfcf;"></div>
<span class="t" id="t96" style="top:353.10px;font-size:8.7px;line-height:12px;color:#343434;left:8.3px;transform-origin:50% 50%;transform:translateX(-50%);">19</span>
<div class="a" style="left:0px;top:363.8px;width:16px;height:0.5px;background:#cfcfcf;"></div>
<span class="t" id="t97" style="top:365.10px;font-size:8.7px;line-height:12px;color:#343434;left:8.3px;transform-origin:50% 50%;transform:translateX(-50%);">20</span>
<div class="a" style="left:0px;top:375.8px;width:16px;height:0.5px;background:#cfcfcf;"></div>
<span class="t" id="t98" style="top:377.10px;font-size:8.7px;line-height:12px;color:#343434;left:8.3px;transform-origin:50% 50%;transform:translateX(-50%);">21</span>
<div class="a" style="left:0px;top:387.8px;width:16px;height:0.5px;background:#cfcfcf;"></div>
<span class="t" id="t99" style="top:389.10px;font-size:8.7px;line-height:12px;color:#343434;left:8.3px;transform-origin:50% 50%;transform:translateX(-50%);">22</span>
<div class="a" style="left:0px;top:399.8px;width:16px;height:0.5px;background:#cfcfcf;"></div>
<span class="t" id="t100" style="top:401.10px;font-size:8.7px;line-height:12px;color:#343434;left:8.3px;transform-origin:50% 50%;transform:translateX(-50%);">23</span>
<div class="a" style="left:0px;top:411.8px;width:16px;height:0.5px;background:#cfcfcf;"></div>
<span class="t" id="t101" style="top:413.10px;font-size:8.7px;line-height:12px;color:#343434;left:8.3px;transform-origin:50% 50%;transform:translateX(-50%);">24</span>
<div class="a" style="left:0px;top:423.8px;width:16px;height:0.5px;background:#cfcfcf;"></div>
<span class="t" id="t102" style="top:425.10px;font-size:8.7px;line-height:12px;color:#343434;left:8.3px;transform-origin:50% 50%;transform:translateX(-50%);">25</span>
<div class="a" style="left:0px;top:435.8px;width:16px;height:0.5px;background:#cfcfcf;"></div>
<span class="t" id="t103" style="top:437.10px;font-size:8.7px;line-height:12px;color:#343434;left:8.3px;transform-origin:50% 50%;transform:translateX(-50%);">26</span>
<div class="a" style="left:0px;top:447.8px;width:16px;height:0.5px;background:#cfcfcf;"></div>
<span class="t" id="t104" style="top:449.10px;font-size:8.7px;line-height:12px;color:#343434;left:8.3px;transform-origin:50% 50%;transform:translateX(-50%);">27</span>
<div class="a" style="left:0px;top:459.8px;width:16px;height:0.5px;background:#cfcfcf;"></div>
<span class="t" id="t105" style="top:461.10px;font-size:8.7px;line-height:12px;color:#343434;left:8.3px;transform-origin:50% 50%;transform:translateX(-50%);">28</span>
<div class="a" style="left:0px;top:471.8px;width:16px;height:0.5px;background:#cfcfcf;"></div>
<span class="t" id="t106" style="top:473.10px;font-size:8.7px;line-height:12px;color:#343434;left:8.3px;transform-origin:50% 50%;transform:translateX(-50%);">29</span>
<div class="a" style="left:0px;top:483.8px;width:16px;height:0.5px;background:#cfcfcf;"></div>
<div class="a" style="left:16px;top:147.60000000000002px;width:931.5px;height:1px;background:#e2e2e2;"></div>
<div class="a" style="left:16px;top:159.60000000000002px;width:931.5px;height:1px;background:#e2e2e2;"></div>
<div class="a" style="left:16px;top:171.60000000000002px;width:931.5px;height:1px;background:#e2e2e2;"></div>
<div class="a" style="left:888.7px;top:183.60000000000002px;width:58.8px;height:1px;background:#e2e2e2;"></div>
<div class="a" style="left:888.7px;top:195.60000000000002px;width:58.8px;height:1px;background:#e2e2e2;"></div>
<div class="a" style="left:888.7px;top:207.60000000000002px;width:58.8px;height:1px;background:#e2e2e2;"></div>
<div class="a" style="left:888.7px;top:219.60000000000002px;width:58.8px;height:1px;background:#e2e2e2;"></div>
<div class="a" style="left:888.7px;top:231.60000000000002px;width:58.8px;height:1px;background:#e2e2e2;"></div>
<div class="a" style="left:888.7px;top:243.60000000000002px;width:58.8px;height:1px;background:#e2e2e2;"></div>
<div class="a" style="left:888.7px;top:255.60000000000002px;width:58.8px;height:1px;background:#e2e2e2;"></div>
<div class="a" style="left:888.7px;top:267.6px;width:58.8px;height:1px;background:#e2e2e2;"></div>
<div class="a" style="left:888.7px;top:279.6px;width:58.8px;height:1px;background:#e2e2e2;"></div>
<div class="a" style="left:888.7px;top:291.6px;width:58.8px;height:1px;background:#e2e2e2;"></div>
<div class="a" style="left:888.7px;top:303.6px;width:58.8px;height:1px;background:#e2e2e2;"></div>
<div class="a" style="left:888.7px;top:315.6px;width:58.8px;height:1px;background:#e2e2e2;"></div>
<div class="a" style="left:888.7px;top:327.6px;width:58.8px;height:1px;background:#e2e2e2;"></div>
<div class="a" style="left:888.7px;top:339.6px;width:58.8px;height:1px;background:#e2e2e2;"></div>
<div class="a" style="left:888.7px;top:351.6px;width:58.8px;height:1px;background:#e2e2e2;"></div>
<div class="a" style="left:888.7px;top:363.6px;width:58.8px;height:1px;background:#e2e2e2;"></div>
<div class="a" style="left:888.7px;top:375.6px;width:58.8px;height:1px;background:#e2e2e2;"></div>
<div class="a" style="left:888.7px;top:387.6px;width:58.8px;height:1px;background:#e2e2e2;"></div>
<div class="a" style="left:888.7px;top:399.6px;width:58.8px;height:1px;background:#e2e2e2;"></div>
<div class="a" style="left:888.7px;top:411.6px;width:58.8px;height:1px;background:#e2e2e2;"></div>
<div class="a" style="left:888.7px;top:423.6px;width:58.8px;height:1px;background:#e2e2e2;"></div>
<div class="a" style="left:888.7px;top:435.6px;width:58.8px;height:1px;background:#e2e2e2;"></div>
<div class="a" style="left:888.7px;top:447.6px;width:58.8px;height:1px;background:#e2e2e2;"></div>
<div class="a" style="left:888.7px;top:459.6px;width:58.8px;height:1px;background:#e2e2e2;"></div>
<div class="a" style="left:888.7px;top:471.6px;width:58.8px;height:1px;background:#e2e2e2;"></div>
<div class="a" style="left:888.7px;top:483.6px;width:58.8px;height:1px;background:#e2e2e2;"></div>
<div class="a" style="left:126.10000000000001px;top:136.3px;width:1px;height:36.0px;background:#e2e2e2;"></div>
<div class="a" style="left:198.70000000000002px;top:136.3px;width:1px;height:36.0px;background:#e2e2e2;"></div>
<div class="a" style="left:255.79999999999998px;top:136.3px;width:1px;height:36.0px;background:#e2e2e2;"></div>
<div class="a" style="left:312.9px;top:136.3px;width:1px;height:36.0px;background:#e2e2e2;"></div>
<div class="a" style="left:370.0px;top:136.3px;width:1px;height:36.0px;background:#e2e2e2;"></div>
<div class="a" style="left:427.09999999999997px;top:136.3px;width:1px;height:36.0px;background:#e2e2e2;"></div>
<div class="a" style="left:484.09999999999997px;top:136.3px;width:1px;height:36.0px;background:#e2e2e2;"></div>
<div class="a" style="left:541.1px;top:136.3px;width:1px;height:36.0px;background:#e2e2e2;"></div>
<div class="a" style="left:598.1px;top:136.3px;width:1px;height:36.0px;background:#e2e2e2;"></div>
<div class="a" style="left:655.1px;top:136.3px;width:1px;height:36.0px;background:#e2e2e2;"></div>
<div class="a" style="left:712.1px;top:136.3px;width:1px;height:36.0px;background:#e2e2e2;"></div>
<div class="a" style="left:769.1px;top:136.3px;width:1px;height:36.0px;background:#e2e2e2;"></div>
<div class="a" style="left:826.1px;top:136.3px;width:1px;height:36.0px;background:#e2e2e2;"></div>
<div class="a" style="left:888.1px;top:136.3px;width:1px;height:348.0px;background:#e2e2e2;"></div>
<div class="a" style="left:928.1px;top:136.3px;width:1px;height:348.0px;background:#e2e2e2;"></div>
<div class="a" style="left:946.9px;top:136.3px;width:1px;height:36.0px;background:#e2e2e2;"></div>
<div class="a" style="left:16px;top:148.3px;width:183.3px;height:12.0px;background:#d9e1f2;"></div>
<div class="a" style="left:16px;top:172.3px;width:872.7px;height:24.0px;background:#d9e1f2;"></div>
<div class="a" style="left:16px;top:195.60000000000002px;width:872.7px;height:0.7px;background:#a9bde3;"></div>
<span class="t" id="t107" style="top:149.00px;font-size:8.8px;line-height:12px;color:#141414;left:18.5px;transform-origin:0 50%;transform:scaleX(0.8511);">THN</span>
<span class="t" id="t108" style="top:149.00px;font-size:8.8px;line-height:12px;color:#141414;right:773.6px;transform-origin:100% 50%;transform:scaleX(0.9530);">(Multiple Items)</span>
<div class="a" style="left:189px;top:149.3px;width:9.5px;height:10px;background:#fcfcfc;border:0.6px solid #b8b8b8;"></div>
<svg class="a" style="left:190.5px;top:151.3px;" width="7" height="6" viewBox="0 0 7 6"><path d="M2 0.5 H6.5 L4.8 2.6 V5 L3.7 4.2 V2.6 Z" fill="#444"/><path d="M0 3.6 H2 L1 4.8 Z" fill="#444"/></svg>
<span class="t" id="t109" style="top:173.00px;font-size:8.8px;line-height:12px;color:#111;font-weight:bold;left:18.5px;transform-origin:0 50%;transform:scaleX(0.8553);">Sum of</span>
<span class="t" id="t110" style="top:185.00px;font-size:8.8px;line-height:12px;color:#111;font-weight:bold;left:18.5px;transform-origin:0 50%;transform:scaleX(0.8321);">Row Lab</span>
<span class="t" id="t111" style="top:185.00px;font-size:8.8px;line-height:12px;color:#111;font-weight:bold;left:201.0px;transform-origin:0 50%;transform:scaleX(0.9000);">2</span>
<span class="t" id="t112" style="top:185.00px;font-size:8.8px;line-height:12px;color:#111;font-weight:bold;left:258.09999999999997px;transform-origin:0 50%;transform:scaleX(0.9000);">3</span>
<span class="t" id="t113" style="top:185.00px;font-size:8.8px;line-height:12px;color:#111;font-weight:bold;left:315.2px;transform-origin:0 50%;transform:scaleX(0.9000);">4</span>
<span class="t" id="t114" style="top:185.00px;font-size:8.8px;line-height:12px;color:#111;font-weight:bold;left:372.3px;transform-origin:0 50%;transform:scaleX(0.9000);">5</span>
<span class="t" id="t115" style="top:185.00px;font-size:8.8px;line-height:12px;color:#111;font-weight:bold;left:429.4px;transform-origin:0 50%;transform:scaleX(0.9000);">6</span>
<span class="t" id="t116" style="top:185.00px;font-size:8.8px;line-height:12px;color:#111;font-weight:bold;left:486.4px;transform-origin:0 50%;transform:scaleX(0.9000);">7</span>
<span class="t" id="t117" style="top:185.00px;font-size:8.8px;line-height:12px;color:#111;font-weight:bold;left:543.4000000000001px;transform-origin:0 50%;transform:scaleX(0.9000);">8</span>
<span class="t" id="t118" style="top:185.00px;font-size:8.8px;line-height:12px;color:#111;font-weight:bold;left:600.4000000000001px;transform-origin:0 50%;transform:scaleX(0.9000);">9</span>
<span class="t" id="t119" style="top:185.00px;font-size:8.8px;line-height:12px;color:#111;font-weight:bold;left:657.4000000000001px;transform-origin:0 50%;transform:scaleX(0.9000);">10</span>
<span class="t" id="t120" style="top:185.00px;font-size:8.8px;line-height:12px;color:#111;font-weight:bold;left:714.4000000000001px;transform-origin:0 50%;transform:scaleX(0.9000);">11</span>
<span class="t" id="t121" style="top:185.00px;font-size:8.8px;line-height:12px;color:#111;font-weight:bold;left:771.4000000000001px;transform-origin:0 50%;transform:scaleX(0.9000);">12</span>
<span class="t" id="t122" style="top:185.00px;font-size:8.8px;line-height:12px;color:#111;font-weight:bold;left:828.5px;transform-origin:0 50%;transform:scaleX(0.9031);">Grand Total</span>
<span class="t" id="t123" style="top:197.00px;font-size:8.8px;line-height:12px;color:#141414;left:18.5px;transform-origin:0 50%;transform:scaleX(0.9300);">Adaptor</span>
<span class="t" id="t124" style="top:209.00px;font-size:8.8px;line-height:12px;color:#141414;left:18.5px;transform-origin:0 50%;transform:scaleX(0.9300);">Advan</span>
<span class="t" id="t125" style="top:221.00px;font-size:8.8px;line-height:12px;color:#141414;left:18.5px;transform-origin:0 50%;transform:scaleX(0.9300);">Asesoris</span>
<span class="t" id="t126" style="top:233.00px;font-size:8.8px;line-height:12px;color:#141414;left:18.5px;transform-origin:0 50%;transform:scaleX(0.9300);">Asesoris</span>
<span class="t" id="t127" style="top:245.00px;font-size:8.8px;line-height:12px;color:#141414;left:18.5px;transform-origin:0 50%;transform:scaleX(0.9300);">Asus Zer</span>
<span class="t" id="t128" style="top:257.00px;font-size:8.8px;line-height:12px;color:#141414;left:18.5px;transform-origin:0 50%;transform:scaleX(0.9300);">Cassing</span>
<span class="t" id="t129" style="top:269.00px;font-size:8.8px;line-height:12px;color:#141414;left:18.5px;transform-origin:0 50%;transform:scaleX(0.9300);">CD, DVD</span>
<span class="t" id="t130" style="top:281.00px;font-size:8.8px;line-height:12px;color:#141414;left:18.5px;transform-origin:0 50%;transform:scaleX(0.9300);">Charger</span>
<span class="t" id="t131" style="top:293.00px;font-size:8.8px;line-height:12px;color:#141414;left:18.5px;transform-origin:0 50%;transform:scaleX(0.9300);">Evercos</span>
<span class="t" id="t132" style="top:305.00px;font-size:8.8px;line-height:12px;color:#141414;left:18.5px;transform-origin:0 50%;transform:scaleX(0.9300);">FlashDis</span>
<span class="t" id="t133" style="top:317.00px;font-size:8.8px;line-height:12px;color:#141414;left:18.5px;transform-origin:0 50%;transform:scaleX(0.9300);">Handsfr</span>
<span class="t" id="t134" style="top:329.00px;font-size:8.8px;line-height:12px;color:#141414;left:18.5px;transform-origin:0 50%;transform:scaleX(0.9300);">Hardcase</span>
<span class="t" id="t135" style="top:341.00px;font-size:8.8px;line-height:12px;color:#141414;left:18.5px;transform-origin:0 50%;transform:scaleX(0.9300);">HardDisk</span>
<span class="t" id="t136" style="top:353.00px;font-size:8.8px;line-height:12px;color:#141414;left:18.5px;transform-origin:0 50%;transform:scaleX(0.9300);">Head Set</span>
<span class="t" id="t137" style="top:365.00px;font-size:8.8px;line-height:12px;color:#141414;left:18.5px;transform-origin:0 50%;transform:scaleX(0.9300);">Huawei</span>
<span class="t" id="t138" style="top:377.00px;font-size:8.8px;line-height:12px;color:#141414;left:18.5px;transform-origin:0 50%;transform:scaleX(0.9300);">Iphone</span>
<span class="t" id="t139" style="top:389.00px;font-size:8.8px;line-height:12px;color:#141414;left:18.5px;transform-origin:0 50%;transform:scaleX(0.9300);">Kabel Data</span>
<span class="t" id="t140" style="top:401.00px;font-size:8.8px;line-height:12px;color:#141414;left:18.5px;transform-origin:0 50%;transform:scaleX(0.9300);">Kabel-Kabel</span>
<span class="t" id="t141" style="top:413.00px;font-size:8.8px;line-height:12px;color:#141414;left:18.5px;transform-origin:0 50%;transform:scaleX(0.9300);">Kartu Perdana</span>
<span class="t" id="t142" style="top:425.00px;font-size:8.8px;line-height:12px;color:#141414;left:18.5px;transform-origin:0 50%;transform:scaleX(0.9300);">Kertas</span>
<span class="t" id="t143" style="top:437.00px;font-size:8.8px;line-height:12px;color:#141414;left:18.5px;transform-origin:0 50%;transform:scaleX(0.9300);">Keyboard &amp; Mouse</span>
<span class="t" id="t144" style="top:449.00px;font-size:8.8px;line-height:12px;color:#141414;left:18.5px;transform-origin:0 50%;transform:scaleX(0.9300);">Laptop</span>
<span class="t" id="t145" style="top:461.00px;font-size:8.8px;line-height:12px;color:#141414;left:18.5px;transform-origin:0 50%;transform:scaleX(0.9300);">LCD Projector</span>
<span class="t" id="t146" style="top:473.00px;font-size:8.8px;line-height:12px;color:#141414;left:18.5px;transform-origin:0 50%;transform:scaleX(0.9300);">Luna</span>
<span class="t" id="t147" style="top:197.00px;font-size:8.8px;line-height:12px;color:#141414;right:420.0px;transform-origin:100% 50%;transform:scaleX(0.9200);">95.000</span>
<span class="t" id="t148" style="top:197.00px;font-size:8.8px;line-height:12px;color:#141414;right:192.0px;transform-origin:100% 50%;transform:scaleX(0.9200);">195.000</span>
<span class="t" id="t149" style="top:197.00px;font-size:8.8px;line-height:12px;color:#141414;right:73.0px;transform-origin:100% 50%;transform:scaleX(0.9200);">440.000</span>
<span class="t" id="t150" style="top:209.00px;font-size:8.8px;line-height:12px;color:#141414;right:705.3px;transform-origin:100% 50%;transform:scaleX(0.9200);">75.000</span>
<span class="t" id="t151" style="top:209.00px;font-size:8.8px;line-height:12px;color:#141414;right:420.0px;transform-origin:100% 50%;transform:scaleX(0.9200);">35.000</span>
<span class="t" id="t152" style="top:209.00px;font-size:8.8px;line-height:12px;color:#141414;right:306.0px;transform-origin:100% 50%;transform:scaleX(0.9200);">35.000</span>
<span class="t" id="t153" style="top:209.00px;font-size:8.8px;line-height:12px;color:#141414;right:249.0px;transform-origin:100% 50%;transform:scaleX(0.9200);">280.000</span>
<span class="t" id="t154" style="top:209.00px;font-size:8.8px;line-height:12px;color:#141414;right:192.0px;transform-origin:100% 50%;transform:scaleX(0.9200);">105.000</span>
<span class="t" id="t155" style="top:209.00px;font-size:8.8px;line-height:12px;color:#141414;right:135.0px;transform-origin:100% 50%;transform:scaleX(0.9200);">70.000</span>
<span class="t" id="t156" style="top:209.00px;font-size:8.8px;line-height:12px;color:#141414;right:73.0px;transform-origin:100% 50%;transform:scaleX(0.9200);">775.000</span>
<span class="t" id="t157" style="top:221.00px;font-size:8.8px;line-height:12px;color:#141414;right:705.3px;transform-origin:100% 50%;transform:scaleX(0.9200);">4.965.000</span>
<span class="t" id="t158" style="top:221.00px;font-size:8.8px;line-height:12px;color:#141414;right:648.2px;transform-origin:100% 50%;transform:scaleX(0.9200);">10.785.000</span>
<span class="t" id="t159" style="top:221.00px;font-size:8.8px;line-height:12px;color:#141414;right:591.0999999999999px;transform-origin:100% 50%;transform:scaleX(0.9200);">8.500.000</span>
<span class="t" id="t160" style="top:221.00px;font-size:8.8px;line-height:12px;color:#141414;right:534.0px;transform-origin:100% 50%;transform:scaleX(0.9200);">6.012.500</span>
<span class="t" id="t161" style="top:221.00px;font-size:8.8px;line-height:12px;color:#141414;right:477.0px;transform-origin:100% 50%;transform:scaleX(0.9200);">11.030.000</span>
<span class="t" id="t162" style="top:221.00px;font-size:8.8px;line-height:12px;color:#141414;right:420.0px;transform-origin:100% 50%;transform:scaleX(0.9200);">9.698.000</span>
<span class="t" id="t163" style="top:221.00px;font-size:8.8px;line-height:12px;color:#141414;right:363.0px;transform-origin:100% 50%;transform:scaleX(0.9200);">7.033.000</span>
<span class="t" id="t164" style="top:221.00px;font-size:8.8px;line-height:12px;color:#141414;right:306.0px;transform-origin:100% 50%;transform:scaleX(0.9200);">4.662.000</span>
<span class="t" id="t165" style="top:221.00px;font-size:8.8px;line-height:12px;color:#141414;right:249.0px;transform-origin:100% 50%;transform:scaleX(0.9200);">5.232.500</span>
<span class="t" id="t166" style="top:221.00px;font-size:8.8px;line-height:12px;color:#141414;right:192.0px;transform-origin:100% 50%;transform:scaleX(0.9200);">1.440.000</span>
<span class="t" id="t167" style="top:221.00px;font-size:8.8px;line-height:12px;color:#141414;right:135.0px;transform-origin:100% 50%;transform:scaleX(0.9200);">4.186.750</span>
<span class="t" id="t168" style="top:221.00px;font-size:8.8px;line-height:12px;color:#141414;right:73.0px;transform-origin:100% 50%;transform:scaleX(0.9200);">76.762.250</span>
<span class="t" id="t169" style="top:233.00px;font-size:8.8px;line-height:12px;color:#141414;right:591.0999999999999px;transform-origin:100% 50%;transform:scaleX(0.9200);">15.000</span>
<span class="t" id="t170" style="top:233.00px;font-size:8.8px;line-height:12px;color:#141414;right:135.0px;transform-origin:100% 50%;transform:scaleX(0.9200);">45.000</span>
<span class="t" id="t171" style="top:233.00px;font-size:8.8px;line-height:12px;color:#141414;right:73.0px;transform-origin:100% 50%;transform:scaleX(0.9200);">60.000</span>
<span class="t" id="t172" style="top:245.00px;font-size:8.8px;line-height:12px;color:#141414;right:591.0999999999999px;transform-origin:100% 50%;transform:scaleX(0.9200);">4.772.000</span>
<span class="t" id="t173" style="top:245.00px;font-size:8.8px;line-height:12px;color:#141414;right:534.0px;transform-origin:100% 50%;transform:scaleX(0.9200);">2.999.000</span>
<span class="t" id="t174" style="top:245.00px;font-size:8.8px;line-height:12px;color:#141414;right:477.0px;transform-origin:100% 50%;transform:scaleX(0.9200);">5.998.000</span>
<span class="t" id="t175" style="top:245.00px;font-size:8.8px;line-height:12px;color:#141414;right:363.0px;transform-origin:100% 50%;transform:scaleX(0.9200);">6.049.000</span>
<span class="t" id="t176" style="top:245.00px;font-size:8.8px;line-height:12px;color:#141414;right:306.0px;transform-origin:100% 50%;transform:scaleX(0.9200);">4.360.000</span>
<span class="t" id="t177" style="top:245.00px;font-size:8.8px;line-height:12px;color:#141414;right:249.0px;transform-origin:100% 50%;transform:scaleX(0.9200);">2.399.000</span>
<span class="t" id="t178" style="top:245.00px;font-size:8.8px;line-height:12px;color:#141414;right:192.0px;transform-origin:100% 50%;transform:scaleX(0.9200);">10.096.000</span>
<span class="t" id="t179" style="top:245.00px;font-size:8.8px;line-height:12px;color:#141414;right:135.0px;transform-origin:100% 50%;transform:scaleX(0.9200);">20.293.000</span>
<span class="t" id="t180" style="top:245.00px;font-size:8.8px;line-height:12px;color:#141414;right:73.0px;transform-origin:100% 50%;transform:scaleX(0.9200);">63.415.000</span>
<span class="t" id="t181" style="top:257.00px;font-size:8.8px;line-height:12px;color:#141414;right:705.3px;transform-origin:100% 50%;transform:scaleX(0.9200);">10.685.000</span>
<span class="t" id="t182" style="top:257.00px;font-size:8.8px;line-height:12px;color:#141414;right:648.2px;transform-origin:100% 50%;transform:scaleX(0.9200);">9.300.000</span>
<span class="t" id="t183" style="top:257.00px;font-size:8.8px;line-height:12px;color:#141414;right:591.0999999999999px;transform-origin:100% 50%;transform:scaleX(0.9200);">9.195.000</span>
<span class="t" id="t184" style="top:257.00px;font-size:8.8px;line-height:12px;color:#141414;right:534.0px;transform-origin:100% 50%;transform:scaleX(0.9200);">10.505.000</span>
<span class="t" id="t185" style="top:257.00px;font-size:8.8px;line-height:12px;color:#141414;right:477.0px;transform-origin:100% 50%;transform:scaleX(0.9200);">14.445.000</span>
<span class="t" id="t186" style="top:257.00px;font-size:8.8px;line-height:12px;color:#141414;right:420.0px;transform-origin:100% 50%;transform:scaleX(0.9200);">13.640.000</span>
<span class="t" id="t187" style="top:257.00px;font-size:8.8px;line-height:12px;color:#141414;right:363.0px;transform-origin:100% 50%;transform:scaleX(0.9200);">10.060.000</span>
<span class="t" id="t188" style="top:257.00px;font-size:8.8px;line-height:12px;color:#141414;right:306.0px;transform-origin:100% 50%;transform:scaleX(0.9200);">16.005.000</span>
<span class="t" id="t189" style="top:257.00px;font-size:8.8px;line-height:12px;color:#141414;right:249.0px;transform-origin:100% 50%;transform:scaleX(0.9200);">11.685.000</span>
<span class="t" id="t190" style="top:257.00px;font-size:8.8px;line-height:12px;color:#141414;right:192.0px;transform-origin:100% 50%;transform:scaleX(0.9200);">13.890.000</span>
<span class="t" id="t191" style="top:257.00px;font-size:8.8px;line-height:12px;color:#141414;right:135.0px;transform-origin:100% 50%;transform:scaleX(0.9200);">8.265.250</span>
<span class="t" id="t192" style="top:257.00px;font-size:8.8px;line-height:12px;color:#141414;right:73.0px;transform-origin:100% 50%;transform:scaleX(0.9200);">139.240.250</span>
<span class="t" id="t193" style="top:269.00px;font-size:8.8px;line-height:12px;color:#141414;right:705.3px;transform-origin:100% 50%;transform:scaleX(0.9200);">710.000</span>
<span class="t" id="t194" style="top:269.00px;font-size:8.8px;line-height:12px;color:#141414;right:648.2px;transform-origin:100% 50%;transform:scaleX(0.9200);">1.020.000</span>
<span class="t" id="t195" style="top:269.00px;font-size:8.8px;line-height:12px;color:#141414;right:591.0999999999999px;transform-origin:100% 50%;transform:scaleX(0.9200);">1.370.000</span>
<span class="t" id="t196" style="top:269.00px;font-size:8.8px;line-height:12px;color:#141414;right:534.0px;transform-origin:100% 50%;transform:scaleX(0.9200);">680.000</span>
<span class="t" id="t197" style="top:269.00px;font-size:8.8px;line-height:12px;color:#141414;right:477.0px;transform-origin:100% 50%;transform:scaleX(0.9200);">1.470.000</span>
<span class="t" id="t198" style="top:269.00px;font-size:8.8px;line-height:12px;color:#141414;right:420.0px;transform-origin:100% 50%;transform:scaleX(0.9200);">220.000</span>
<span class="t" id="t199" style="top:269.00px;font-size:8.8px;line-height:12px;color:#141414;right:363.0px;transform-origin:100% 50%;transform:scaleX(0.9200);">720.000</span>
<span class="t" id="t200" style="top:269.00px;font-size:8.8px;line-height:12px;color:#141414;right:306.0px;transform-origin:100% 50%;transform:scaleX(0.9200);">2.130.000</span>
<span class="t" id="t201" style="top:269.00px;font-size:8.8px;line-height:12px;color:#141414;right:249.0px;transform-origin:100% 50%;transform:scaleX(0.9200);">1.730.000</span>
<span class="t" id="t202" style="top:269.00px;font-size:8.8px;line-height:12px;color:#141414;right:192.0px;transform-origin:100% 50%;transform:scaleX(0.9200);">700.000</span>
<span class="t" id="t203" style="top:269.00px;font-size:8.8px;line-height:12px;color:#141414;right:73.0px;transform-origin:100% 50%;transform:scaleX(0.9200);">11.220.000</span>
<span class="t" id="t204" style="top:281.00px;font-size:8.8px;line-height:12px;color:#141414;right:591.0999999999999px;transform-origin:100% 50%;transform:scaleX(0.9200);">150.000</span>
<span class="t" id="t205" style="top:281.00px;font-size:8.8px;line-height:12px;color:#141414;right:249.0px;transform-origin:100% 50%;transform:scaleX(0.9200);">95.000</span>
<span class="t" id="t206" style="top:281.00px;font-size:8.8px;line-height:12px;color:#141414;right:73.0px;transform-origin:100% 50%;transform:scaleX(0.9200);">245.000</span>
<span class="t" id="t207" style="top:293.00px;font-size:8.8px;line-height:12px;color:#141414;right:705.3px;transform-origin:100% 50%;transform:scaleX(0.9200);">1.199.000</span>
<span class="t" id="t208" style="top:293.00px;font-size:8.8px;line-height:12px;color:#141414;right:363.0px;transform-origin:100% 50%;transform:scaleX(0.9200);">1.350.000</span>
<span class="t" id="t209" style="top:293.00px;font-size:8.8px;line-height:12px;color:#141414;right:306.0px;transform-origin:100% 50%;transform:scaleX(0.9200);">1.299.000</span>
<span class="t" id="t210" style="top:293.00px;font-size:8.8px;line-height:12px;color:#141414;right:249.0px;transform-origin:100% 50%;transform:scaleX(0.9200);">3.588.000</span>
<span class="t" id="t211" style="top:293.00px;font-size:8.8px;line-height:12px;color:#141414;right:192.0px;transform-origin:100% 50%;transform:scaleX(0.9200);">1.299.000</span>
<span class="t" id="t212" style="top:293.00px;font-size:8.8px;line-height:12px;color:#141414;right:135.0px;transform-origin:100% 50%;transform:scaleX(0.9200);">1.299.000</span>
<span class="t" id="t213" style="top:293.00px;font-size:8.8px;line-height:12px;color:#141414;right:73.0px;transform-origin:100% 50%;transform:scaleX(0.9200);">12.632.000</span>
<span class="t" id="t214" style="top:305.00px;font-size:8.8px;line-height:12px;color:#141414;right:705.3px;transform-origin:100% 50%;transform:scaleX(0.9200);">1.062.000</span>
<span class="t" id="t215" style="top:305.00px;font-size:8.8px;line-height:12px;color:#141414;right:648.2px;transform-origin:100% 50%;transform:scaleX(0.9200);">620.000</span>
<span class="t" id="t216" style="top:305.00px;font-size:8.8px;line-height:12px;color:#141414;right:591.0999999999999px;transform-origin:100% 50%;transform:scaleX(0.9200);">1.935.000</span>
<span class="t" id="t217" style="top:305.00px;font-size:8.8px;line-height:12px;color:#141414;right:534.0px;transform-origin:100% 50%;transform:scaleX(0.9200);">648.000</span>
<span class="t" id="t218" style="top:305.00px;font-size:8.8px;line-height:12px;color:#141414;right:477.0px;transform-origin:100% 50%;transform:scaleX(0.9200);">445.000</span>
<span class="t" id="t219" style="top:305.00px;font-size:8.8px;line-height:12px;color:#141414;right:420.0px;transform-origin:100% 50%;transform:scaleX(0.9200);">2.065.000</span>
<span class="t" id="t220" style="top:305.00px;font-size:8.8px;line-height:12px;color:#141414;right:363.0px;transform-origin:100% 50%;transform:scaleX(0.9200);">5.460.000</span>
<span class="t" id="t221" style="top:305.00px;font-size:8.8px;line-height:12px;color:#141414;right:306.0px;transform-origin:100% 50%;transform:scaleX(0.9200);">2.785.400</span>
<span class="t" id="t222" style="top:305.00px;font-size:8.8px;line-height:12px;color:#141414;right:249.0px;transform-origin:100% 50%;transform:scaleX(0.9200);">3.110.000</span>
<span class="t" id="t223" style="top:305.00px;font-size:8.8px;line-height:12px;color:#141414;right:192.0px;transform-origin:100% 50%;transform:scaleX(0.9200);">2.225.000</span>
<span class="t" id="t224" style="top:305.00px;font-size:8.8px;line-height:12px;color:#141414;right:135.0px;transform-origin:100% 50%;transform:scaleX(0.9200);">915.000</span>
<span class="t" id="t225" style="top:305.00px;font-size:8.8px;line-height:12px;color:#141414;right:73.0px;transform-origin:100% 50%;transform:scaleX(0.9200);">23.102.400</span>
<span class="t" id="t226" style="top:317.00px;font-size:8.8px;line-height:12px;color:#141414;right:648.2px;transform-origin:100% 50%;transform:scaleX(0.9200);">45.000</span>
<span class="t" id="t227" style="top:317.00px;font-size:8.8px;line-height:12px;color:#141414;right:591.0999999999999px;transform-origin:100% 50%;transform:scaleX(0.9200);">25.000</span>
<span class="t" id="t228" style="top:317.00px;font-size:8.8px;line-height:12px;color:#141414;right:249.0px;transform-origin:100% 50%;transform:scaleX(0.9200);">25.000</span>
<span class="t" id="t229" style="top:317.00px;font-size:8.8px;line-height:12px;color:#141414;right:192.0px;transform-origin:100% 50%;transform:scaleX(0.9200);">60.000</span>
<span class="t" id="t230" style="top:317.00px;font-size:8.8px;line-height:12px;color:#141414;right:135.0px;transform-origin:100% 50%;transform:scaleX(0.9200);">105.000</span>
<span class="t" id="t231" style="top:317.00px;font-size:8.8px;line-height:12px;color:#141414;right:73.0px;transform-origin:100% 50%;transform:scaleX(0.9200);">260.000</span>
<span class="t" id="t232" style="top:329.00px;font-size:8.8px;line-height:12px;color:#141414;right:534.0px;transform-origin:100% 50%;transform:scaleX(0.9200);">40.000</span>
<span class="t" id="t233" style="top:329.00px;font-size:8.8px;line-height:12px;color:#141414;right:249.0px;transform-origin:100% 50%;transform:scaleX(0.9200);">55.000</span>
<span class="t" id="t234" style="top:329.00px;font-size:8.8px;line-height:12px;color:#141414;right:73.0px;transform-origin:100% 50%;transform:scaleX(0.9200);">95.000</span>
<span class="t" id="t235" style="top:341.00px;font-size:8.8px;line-height:12px;color:#141414;right:762.4px;transform-origin:100% 50%;transform:scaleX(0.9200);">26.836.000</span>
<span class="t" id="t236" style="top:341.00px;font-size:8.8px;line-height:12px;color:#141414;right:705.3px;transform-origin:100% 50%;transform:scaleX(0.9200);">19.345.000</span>
<span class="t" id="t237" style="top:341.00px;font-size:8.8px;line-height:12px;color:#141414;right:648.2px;transform-origin:100% 50%;transform:scaleX(0.9200);">18.745.000</span>
<span class="t" id="t238" style="top:341.00px;font-size:8.8px;line-height:12px;color:#141414;right:591.0999999999999px;transform-origin:100% 50%;transform:scaleX(0.9200);">18.060.000</span>
<span class="t" id="t239" style="top:341.00px;font-size:8.8px;line-height:12px;color:#141414;right:534.0px;transform-origin:100% 50%;transform:scaleX(0.9200);">20.755.000</span>
<span class="t" id="t240" style="top:341.00px;font-size:8.8px;line-height:12px;color:#141414;right:477.0px;transform-origin:100% 50%;transform:scaleX(0.9200);">27.856.000</span>
<span class="t" id="t241" style="top:341.00px;font-size:8.8px;line-height:12px;color:#141414;right:420.0px;transform-origin:100% 50%;transform:scaleX(0.9200);">28.660.000</span>
<span class="t" id="t242" style="top:341.00px;font-size:8.8px;line-height:12px;color:#141414;right:363.0px;transform-origin:100% 50%;transform:scaleX(0.9200);">22.170.000</span>
<span class="t" id="t243" style="top:341.00px;font-size:8.8px;line-height:12px;color:#141414;right:306.0px;transform-origin:100% 50%;transform:scaleX(0.9200);">33.050.000</span>
<span class="t" id="t244" style="top:341.00px;font-size:8.8px;line-height:12px;color:#141414;right:249.0px;transform-origin:100% 50%;transform:scaleX(0.9200);">24.090.000</span>
<span class="t" id="t245" style="top:341.00px;font-size:8.8px;line-height:12px;color:#141414;right:192.0px;transform-origin:100% 50%;transform:scaleX(0.9200);">24.880.000</span>
<span class="t" id="t246" style="top:341.00px;font-size:8.8px;line-height:12px;color:#141414;right:135.0px;transform-origin:100% 50%;transform:scaleX(0.9200);">20.732.750</span>
<span class="t" id="t247" style="top:341.00px;font-size:8.8px;line-height:12px;color:#141414;right:73.0px;transform-origin:100% 50%;transform:scaleX(0.9200);">285.179.750</span>
<span class="t" id="t248" style="top:353.00px;font-size:8.8px;line-height:12px;color:#141414;right:762.4px;transform-origin:100% 50%;transform:scaleX(0.9200);">495.000</span>
<span class="t" id="t249" style="top:353.00px;font-size:8.8px;line-height:12px;color:#141414;right:591.0999999999999px;transform-origin:100% 50%;transform:scaleX(0.9200);">450.000</span>
<span class="t" id="t250" style="top:353.00px;font-size:8.8px;line-height:12px;color:#141414;right:363.0px;transform-origin:100% 50%;transform:scaleX(0.9200);">250.000</span>
<span class="t" id="t251" style="top:353.00px;font-size:8.8px;line-height:12px;color:#141414;right:306.0px;transform-origin:100% 50%;transform:scaleX(0.9200);">135.000</span>
<span class="t" id="t252" style="top:353.00px;font-size:8.8px;line-height:12px;color:#141414;right:249.0px;transform-origin:100% 50%;transform:scaleX(0.9200);">140.000</span>
<span class="t" id="t253" style="top:353.00px;font-size:8.8px;line-height:12px;color:#141414;right:192.0px;transform-origin:100% 50%;transform:scaleX(0.9200);">150.000</span>
<span class="t" id="t254" style="top:353.00px;font-size:8.8px;line-height:12px;color:#141414;right:135.0px;transform-origin:100% 50%;transform:scaleX(0.9200);">145.000</span>
<span class="t" id="t255" style="top:353.00px;font-size:8.8px;line-height:12px;color:#141414;right:73.0px;transform-origin:100% 50%;transform:scaleX(0.9200);">1.765.000</span>
<span class="t" id="t256" style="top:365.00px;font-size:8.8px;line-height:12px;color:#141414;right:648.2px;transform-origin:100% 50%;transform:scaleX(0.9200);">3.999.000</span>
<span class="t" id="t257" style="top:365.00px;font-size:8.8px;line-height:12px;color:#141414;right:591.0999999999999px;transform-origin:100% 50%;transform:scaleX(0.9200);">2.099.000</span>
<span class="t" id="t258" style="top:365.00px;font-size:8.8px;line-height:12px;color:#141414;right:363.0px;transform-origin:100% 50%;transform:scaleX(0.9200);">45.000</span>
<span class="t" id="t259" style="top:365.00px;font-size:8.8px;line-height:12px;color:#141414;right:73.0px;transform-origin:100% 50%;transform:scaleX(0.9200);">6.143.000</span>
<span class="t" id="t260" style="top:377.00px;font-size:8.8px;line-height:12px;color:#141414;right:762.4px;transform-origin:100% 50%;transform:scaleX(0.9200);">38.599.000</span>
<span class="t" id="t261" style="top:377.00px;font-size:8.8px;line-height:12px;color:#141414;right:705.3px;transform-origin:100% 50%;transform:scaleX(0.9200);">10.300.000</span>
<span class="t" id="t262" style="top:377.00px;font-size:8.8px;line-height:12px;color:#141414;right:648.2px;transform-origin:100% 50%;transform:scaleX(0.9200);">36.039.000</span>
<span class="t" id="t263" style="top:377.00px;font-size:8.8px;line-height:12px;color:#141414;right:591.0999999999999px;transform-origin:100% 50%;transform:scaleX(0.9200);">48.638.000</span>
<span class="t" id="t264" style="top:377.00px;font-size:8.8px;line-height:12px;color:#141414;right:534.0px;transform-origin:100% 50%;transform:scaleX(0.9200);">15.270.000</span>
<span class="t" id="t265" style="top:377.00px;font-size:8.8px;line-height:12px;color:#141414;right:477.0px;transform-origin:100% 50%;transform:scaleX(0.9200);">17.998.000</span>
<span class="t" id="t266" style="top:377.00px;font-size:8.8px;line-height:12px;color:#141414;right:420.0px;transform-origin:100% 50%;transform:scaleX(0.9200);">25.739.000</span>
<span class="t" id="t267" style="top:377.00px;font-size:8.8px;line-height:12px;color:#141414;right:363.0px;transform-origin:100% 50%;transform:scaleX(0.9200);">28.839.000</span>
<span class="t" id="t268" style="top:377.00px;font-size:8.8px;line-height:12px;color:#141414;right:306.0px;transform-origin:100% 50%;transform:scaleX(0.9200);">19.570.000</span>
<span class="t" id="t269" style="top:377.00px;font-size:8.8px;line-height:12px;color:#141414;right:249.0px;transform-origin:100% 50%;transform:scaleX(0.9200);">19.499.000</span>
<span class="t" id="t270" style="top:377.00px;font-size:8.8px;line-height:12px;color:#141414;right:192.0px;transform-origin:100% 50%;transform:scaleX(0.9200);">51.339.000</span>
<span class="t" id="t271" style="top:377.00px;font-size:8.8px;line-height:12px;color:#141414;right:135.0px;transform-origin:100% 50%;transform:scaleX(0.9200);">36.619.000</span>
<span class="t" id="t272" style="top:377.00px;font-size:8.8px;line-height:12px;color:#141414;right:73.0px;transform-origin:100% 50%;transform:scaleX(0.9200);">348.449.000</span>
<span class="t" id="t273" style="top:389.00px;font-size:8.8px;line-height:12px;color:#141414;right:591.0999999999999px;transform-origin:100% 50%;transform:scaleX(0.9200);">20.000</span>
<span class="t" id="t274" style="top:389.00px;font-size:8.8px;line-height:12px;color:#141414;right:534.0px;transform-origin:100% 50%;transform:scaleX(0.9200);">25.000</span>
<span class="t" id="t275" style="top:389.00px;font-size:8.8px;line-height:12px;color:#141414;right:306.0px;transform-origin:100% 50%;transform:scaleX(0.9200);">15.000</span>
<span class="t" id="t276" style="top:389.00px;font-size:8.8px;line-height:12px;color:#141414;right:192.0px;transform-origin:100% 50%;transform:scaleX(0.9200);">125.000</span>
<span class="t" id="t277" style="top:389.00px;font-size:8.8px;line-height:12px;color:#141414;right:73.0px;transform-origin:100% 50%;transform:scaleX(0.9200);">185.000</span>
<span class="t" id="t278" style="top:401.00px;font-size:8.8px;line-height:12px;color:#141414;right:762.4px;transform-origin:100% 50%;transform:scaleX(0.9200);">41.000</span>
<span class="t" id="t279" style="top:401.00px;font-size:8.8px;line-height:12px;color:#141414;right:705.3px;transform-origin:100% 50%;transform:scaleX(0.9200);">225.000</span>
<span class="t" id="t280" style="top:401.00px;font-size:8.8px;line-height:12px;color:#141414;right:648.2px;transform-origin:100% 50%;transform:scaleX(0.9200);">210.000</span>
<span class="t" id="t281" style="top:401.00px;font-size:8.8px;line-height:12px;color:#141414;right:591.0999999999999px;transform-origin:100% 50%;transform:scaleX(0.9200);">220.000</span>
<span class="t" id="t282" style="top:401.00px;font-size:8.8px;line-height:12px;color:#141414;right:534.0px;transform-origin:100% 50%;transform:scaleX(0.9200);">221.000</span>
<span class="t" id="t283" style="top:401.00px;font-size:8.8px;line-height:12px;color:#141414;right:477.0px;transform-origin:100% 50%;transform:scaleX(0.9200);">680.000</span>
<span class="t" id="t284" style="top:401.00px;font-size:8.8px;line-height:12px;color:#141414;right:420.0px;transform-origin:100% 50%;transform:scaleX(0.9200);">165.000</span>
<span class="t" id="t285" style="top:401.00px;font-size:8.8px;line-height:12px;color:#141414;right:363.0px;transform-origin:100% 50%;transform:scaleX(0.9200);">175.000</span>
<span class="t" id="t286" style="top:401.00px;font-size:8.8px;line-height:12px;color:#141414;right:249.0px;transform-origin:100% 50%;transform:scaleX(0.9200);">201.000</span>
<span class="t" id="t287" style="top:401.00px;font-size:8.8px;line-height:12px;color:#141414;right:192.0px;transform-origin:100% 50%;transform:scaleX(0.9200);">290.000</span>
<span class="t" id="t288" style="top:401.00px;font-size:8.8px;line-height:12px;color:#141414;right:135.0px;transform-origin:100% 50%;transform:scaleX(0.9200);">75.000</span>
<span class="t" id="t289" style="top:401.00px;font-size:8.8px;line-height:12px;color:#141414;right:73.0px;transform-origin:100% 50%;transform:scaleX(0.9200);">2.503.000</span>
<span class="t" id="t290" style="top:413.00px;font-size:8.8px;line-height:12px;color:#141414;right:762.4px;transform-origin:100% 50%;transform:scaleX(0.9200);">85.000</span>
<span class="t" id="t291" style="top:413.00px;font-size:8.8px;line-height:12px;color:#141414;right:705.3px;transform-origin:100% 50%;transform:scaleX(0.9200);">155.000</span>
<span class="t" id="t292" style="top:413.00px;font-size:8.8px;line-height:12px;color:#141414;right:648.2px;transform-origin:100% 50%;transform:scaleX(0.9200);">410.000</span>
<span class="t" id="t293" style="top:413.00px;font-size:8.8px;line-height:12px;color:#141414;right:591.0999999999999px;transform-origin:100% 50%;transform:scaleX(0.9200);">170.000</span>
<span class="t" id="t294" style="top:413.00px;font-size:8.8px;line-height:12px;color:#141414;right:534.0px;transform-origin:100% 50%;transform:scaleX(0.9200);">455.000</span>
<span class="t" id="t295" style="top:413.00px;font-size:8.8px;line-height:12px;color:#141414;right:477.0px;transform-origin:100% 50%;transform:scaleX(0.9200);">405.000</span>
<span class="t" id="t296" style="top:413.00px;font-size:8.8px;line-height:12px;color:#141414;right:420.0px;transform-origin:100% 50%;transform:scaleX(0.9200);">170.000</span>
<span class="t" id="t297" style="top:413.00px;font-size:8.8px;line-height:12px;color:#141414;right:363.0px;transform-origin:100% 50%;transform:scaleX(0.9200);">275.000</span>
<span class="t" id="t298" style="top:413.00px;font-size:8.8px;line-height:12px;color:#141414;right:306.0px;transform-origin:100% 50%;transform:scaleX(0.9200);">447.500</span>
<span class="t" id="t299" style="top:413.00px;font-size:8.8px;line-height:12px;color:#141414;right:249.0px;transform-origin:100% 50%;transform:scaleX(0.9200);">245.000</span>
<span class="t" id="t300" style="top:413.00px;font-size:8.8px;line-height:12px;color:#141414;right:192.0px;transform-origin:100% 50%;transform:scaleX(0.9200);">95.000</span>
<span class="t" id="t301" style="top:413.00px;font-size:8.8px;line-height:12px;color:#141414;right:135.0px;transform-origin:100% 50%;transform:scaleX(0.9200);">440.000</span>
<span class="t" id="t302" style="top:413.00px;font-size:8.8px;line-height:12px;color:#141414;right:73.0px;transform-origin:100% 50%;transform:scaleX(0.9200);">3.352.500</span>
<span class="t" id="t303" style="top:425.00px;font-size:8.8px;line-height:12px;color:#141414;right:762.4px;transform-origin:100% 50%;transform:scaleX(0.9200);">45.000</span>
<span class="t" id="t304" style="top:425.00px;font-size:8.8px;line-height:12px;color:#141414;right:705.3px;transform-origin:100% 50%;transform:scaleX(0.9200);">45.000</span>
<span class="t" id="t305" style="top:425.00px;font-size:8.8px;line-height:12px;color:#141414;right:420.0px;transform-origin:100% 50%;transform:scaleX(0.9200);">90.000</span>
<span class="t" id="t306" style="top:425.00px;font-size:8.8px;line-height:12px;color:#141414;right:249.0px;transform-origin:100% 50%;transform:scaleX(0.9200);">36.000</span>
<span class="t" id="t307" style="top:425.00px;font-size:8.8px;line-height:12px;color:#141414;right:192.0px;transform-origin:100% 50%;transform:scaleX(0.9200);">50.000</span>
<span class="t" id="t308" style="top:425.00px;font-size:8.8px;line-height:12px;color:#141414;right:73.0px;transform-origin:100% 50%;transform:scaleX(0.9200);">266.000</span>
<span class="t" id="t309" style="top:437.00px;font-size:8.8px;line-height:12px;color:#141414;right:762.4px;transform-origin:100% 50%;transform:scaleX(0.9200);">11.614.000</span>
<span class="t" id="t310" style="top:437.00px;font-size:8.8px;line-height:12px;color:#141414;right:705.3px;transform-origin:100% 50%;transform:scaleX(0.9200);">11.440.000</span>
<span class="t" id="t311" style="top:437.00px;font-size:8.8px;line-height:12px;color:#141414;right:648.2px;transform-origin:100% 50%;transform:scaleX(0.9200);">11.265.000</span>
<span class="t" id="t312" style="top:437.00px;font-size:8.8px;line-height:12px;color:#141414;right:591.0999999999999px;transform-origin:100% 50%;transform:scaleX(0.9200);">9.810.000</span>
<span class="t" id="t313" style="top:437.00px;font-size:8.8px;line-height:12px;color:#141414;right:534.0px;transform-origin:100% 50%;transform:scaleX(0.9200);">9.261.000</span>
<span class="t" id="t314" style="top:437.00px;font-size:8.8px;line-height:12px;color:#141414;right:477.0px;transform-origin:100% 50%;transform:scaleX(0.9200);">10.147.000</span>
<span class="t" id="t315" style="top:437.00px;font-size:8.8px;line-height:12px;color:#141414;right:420.0px;transform-origin:100% 50%;transform:scaleX(0.9200);">16.207.000</span>
<span class="t" id="t316" style="top:437.00px;font-size:8.8px;line-height:12px;color:#141414;right:363.0px;transform-origin:100% 50%;transform:scaleX(0.9200);">19.531.000</span>
<span class="t" id="t317" style="top:437.00px;font-size:8.8px;line-height:12px;color:#141414;right:306.0px;transform-origin:100% 50%;transform:scaleX(0.9200);">17.144.000</span>
<span class="t" id="t318" style="top:437.00px;font-size:8.8px;line-height:12px;color:#141414;right:249.0px;transform-origin:100% 50%;transform:scaleX(0.9200);">13.422.000</span>
<span class="t" id="t319" style="top:437.00px;font-size:8.8px;line-height:12px;color:#141414;right:192.0px;transform-origin:100% 50%;transform:scaleX(0.9200);">12.955.000</span>
<span class="t" id="t320" style="top:437.00px;font-size:8.8px;line-height:12px;color:#141414;right:135.0px;transform-origin:100% 50%;transform:scaleX(0.9200);">11.460.000</span>
<span class="t" id="t321" style="top:437.00px;font-size:8.8px;line-height:12px;color:#141414;right:73.0px;transform-origin:100% 50%;transform:scaleX(0.9200);">154.256.000</span>
<span class="t" id="t322" style="top:449.00px;font-size:8.8px;line-height:12px;color:#141414;right:762.4px;transform-origin:100% 50%;transform:scaleX(0.9200);">1.039.070.000</span>
<span class="t" id="t323" style="top:449.00px;font-size:8.8px;line-height:12px;color:#141414;right:705.3px;transform-origin:100% 50%;transform:scaleX(0.9200);">966.464.000</span>
<span class="t" id="t324" style="top:449.00px;font-size:8.8px;line-height:12px;color:#141414;right:648.2px;transform-origin:100% 50%;transform:scaleX(0.9200);">1.063.978.000</span>
<span class="t" id="t325" style="top:449.00px;font-size:8.8px;line-height:12px;color:#141414;right:591.0999999999999px;transform-origin:100% 50%;transform:scaleX(0.9200);">963.904.000</span>
<span class="t" id="t326" style="top:449.00px;font-size:8.8px;line-height:12px;color:#141414;right:534.0px;transform-origin:100% 50%;transform:scaleX(0.9200);">841.038.000</span>
<span class="t" id="t327" style="top:449.00px;font-size:8.8px;line-height:12px;color:#141414;right:477.0px;transform-origin:100% 50%;transform:scaleX(0.9200);">772.589.000</span>
<span class="t" id="t328" style="top:449.00px;font-size:8.8px;line-height:12px;color:#141414;right:420.0px;transform-origin:100% 50%;transform:scaleX(0.9200);">1.480.420.000</span>
<span class="t" id="t329" style="top:449.00px;font-size:8.8px;line-height:12px;color:#141414;right:363.0px;transform-origin:100% 50%;transform:scaleX(0.9200);">1.998.311.000</span>
<span class="t" id="t330" style="top:449.00px;font-size:8.8px;line-height:12px;color:#141414;right:306.0px;transform-origin:100% 50%;transform:scaleX(0.9200);">1.494.450.000</span>
<span class="t" id="t331" style="top:449.00px;font-size:8.8px;line-height:12px;color:#141414;right:249.0px;transform-origin:100% 50%;transform:scaleX(0.9200);">1.495.650.000</span>
<span class="t" id="t332" style="top:449.00px;font-size:8.8px;line-height:12px;color:#141414;right:192.0px;transform-origin:100% 50%;transform:scaleX(0.9200);">1.230.053.000</span>
<span class="t" id="t333" style="top:449.00px;font-size:8.8px;line-height:12px;color:#141414;right:135.0px;transform-origin:100% 50%;transform:scaleX(0.9200);">943.538.000</span>
<span class="t" id="t334" style="top:449.00px;font-size:8.8px;line-height:12px;color:#141414;right:73.0px;transform-origin:100% 50%;transform:scaleX(0.9200);">14.289.465.000</span>
<span class="t" id="t335" style="top:461.00px;font-size:8.8px;line-height:12px;color:#141414;right:648.2px;transform-origin:100% 50%;transform:scaleX(0.9200);">4.250.000</span>
<span class="t" id="t336" style="top:461.00px;font-size:8.8px;line-height:12px;color:#141414;right:591.0999999999999px;transform-origin:100% 50%;transform:scaleX(0.9200);">4.220.000</span>
<span class="t" id="t337" style="top:461.00px;font-size:8.8px;line-height:12px;color:#141414;right:534.0px;transform-origin:100% 50%;transform:scaleX(0.9200);">4.000.000</span>
<span class="t" id="t338" style="top:461.00px;font-size:8.8px;line-height:12px;color:#141414;right:477.0px;transform-origin:100% 50%;transform:scaleX(0.9200);">5.550.000</span>
<span class="t" id="t339" style="top:461.00px;font-size:8.8px;line-height:12px;color:#141414;right:420.0px;transform-origin:100% 50%;transform:scaleX(0.9200);">4.250.000</span>
<span class="t" id="t340" style="top:461.00px;font-size:8.8px;line-height:12px;color:#141414;right:306.0px;transform-origin:100% 50%;transform:scaleX(0.9200);">1.200.000</span>
<span class="t" id="t341" style="top:461.00px;font-size:8.8px;line-height:12px;color:#141414;right:249.0px;transform-origin:100% 50%;transform:scaleX(0.9200);">5.150.000</span>
<span class="t" id="t342" style="top:461.00px;font-size:8.8px;line-height:12px;color:#141414;right:135.0px;transform-origin:100% 50%;transform:scaleX(0.9200);">9.865.000</span>
<span class="t" id="t343" style="top:461.00px;font-size:8.8px;line-height:12px;color:#141414;right:73.0px;transform-origin:100% 50%;transform:scaleX(0.9200);">38.485.000</span>
<span class="t" id="t344" style="top:473.00px;font-size:8.8px;line-height:12px;color:#141414;right:762.4px;transform-origin:100% 50%;transform:scaleX(0.9200);">16.894.000</span>
<span class="t" id="t345" style="top:473.00px;font-size:8.8px;line-height:12px;color:#141414;right:648.2px;transform-origin:100% 50%;transform:scaleX(0.9200);">9.496.000</span>
<span class="t" id="t346" style="top:473.00px;font-size:8.8px;line-height:12px;color:#141414;right:591.0999999999999px;transform-origin:100% 50%;transform:scaleX(0.9200);">11.895.000</span>
<span class="t" id="t347" style="top:473.00px;font-size:8.8px;line-height:12px;color:#141414;right:534.0px;transform-origin:100% 50%;transform:scaleX(0.9200);">1.899.000</span>
<span class="t" id="t348" style="top:473.00px;font-size:8.8px;line-height:12px;color:#141414;right:420.0px;transform-origin:100% 50%;transform:scaleX(0.9200);">4.598.000</span>
<span class="t" id="t349" style="top:473.00px;font-size:8.8px;line-height:12px;color:#141414;right:363.0px;transform-origin:100% 50%;transform:scaleX(0.9200);">2.999.000</span>
<span class="t" id="t350" style="top:473.00px;font-size:8.8px;line-height:12px;color:#141414;right:306.0px;transform-origin:100% 50%;transform:scaleX(0.9200);">5.198.000</span>
<span class="t" id="t351" style="top:473.00px;font-size:8.8px;line-height:12px;color:#141414;right:249.0px;transform-origin:100% 50%;transform:scaleX(0.9200);">20.992.000</span>
<span class="t" id="t352" style="top:473.00px;font-size:8.8px;line-height:12px;color:#141414;right:192.0px;transform-origin:100% 50%;transform:scaleX(0.9200);">2.499.000</span>
<span class="t" id="t353" style="top:473.00px;font-size:8.8px;line-height:12px;color:#141414;right:135.0px;transform-origin:100% 50%;transform:scaleX(0.9200);">7.997.000</span>
<span class="t" id="t354" style="top:473.00px;font-size:8.8px;line-height:12px;color:#141414;right:73.0px;transform-origin:100% 50%;transform:scaleX(0.9200);">84.467.000</span>
<div class="a" style="left:598px;top:159.4px;width:58.4px;height:13.4px;border:1.2px solid #217346;"></div>
<div class="a" style="left:655px;top:170.60000000000002px;width:3px;height:3px;background:#217346;border:0.5px solid #fff;"></div>
<div class="a" style="left:947.6px;top:124.3px;width:12.4px;height:362px;background:#e1e1e1;"></div>
<div class="a" style="left:949.2px;top:125.8px;width:9.2px;height:9.4px;background:#fff;border:0.5px solid #c8c8c8;"></div>
<svg class="a" style="left:951.6px;top:129.3px;" width="5" height="3" viewBox="0 0 5 3"><path d="M0 2.6 H4.4 L2.2 0 Z" fill="#555"/></svg>
<div class="a" style="left:949.2px;top:136.2px;width:9.2px;height:164px;background:#fff;border:0.5px solid #c8c8c8;"></div>
<div class="a" style="left:949.2px;top:475px;width:9.2px;height:10px;background:#fff;border:0.5px solid #c8c8c8;"></div>
<svg class="a" style="left:951.6px;top:478.8px;" width="5" height="3" viewBox="0 0 5 3"><path d="M0 0 H4.4 L2.2 2.6 Z" fill="#555"/></svg>
<div class="a" style="left:47.7px;top:160.2px;width:151.7px;height:169px;background:#fff;border:0.6px solid #cfcfcf;box-shadow:0.8px 1.5px 3px rgba(0,0,0,0.32);"></div>
<div class="a" style="left:48.5px;top:324.8px;width:150px;height:0.5px;background:#e4e4e4;"></div>
<div class="a" style="left:195.5px;top:326.5px;width:1px;height:1px;background:#a5a5a5;"></div>
<div class="a" style="left:193.5px;top:326.5px;width:1px;height:1px;background:#a5a5a5;"></div>
<div class="a" style="left:195.5px;top:324.5px;width:1px;height:1px;background:#a5a5a5;"></div>
<div class="a" style="left:51.5px;top:163.5px;width:144.5px;height:11.2px;background:#fff;border:0.7px solid #cdcdcd;"></div>
<span class="t" id="t355" style="top:163.50px;font-size:8.2px;line-height:11px;color:#8c8c8c;left:52.6px;transform-origin:0 50%;transform:scaleX(0.8400);">Search</span>
<svg class="a" style="left:186px;top:164.5px;" width="9" height="9" viewBox="0 0 9 9"><circle cx="5.4" cy="3.6" r="2.9" fill="none" stroke="#3b78b5" stroke-width="0.9"/><path d="M3.4 5.8 L0.6 8.6" stroke="#3b78b5" stroke-width="1"/></svg>
<div class="a" style="left:51.5px;top:177px;width:144.5px;height:105.3px;background:#fff;border:0.6px solid #ececec;"></div>
<div class="a" style="left:184.3px;top:177.5px;width:10.2px;height:104.3px;background:#f0f0f0;"></div>
<svg class="a" style="left:186.5px;top:180.5px;" width="6" height="4" viewBox="0 0 6 4"><path d="M0.5 3.3 L2.9 0.8 L5.3 3.3" fill="none" stroke="#555" stroke-width="0.9"/></svg>
<div class="a" style="left:185px;top:188.3px;width:8.8px;height:56.7px;background:#c9c9c9;"></div>
<svg class="a" style="left:186.5px;top:274px;" width="6" height="4" viewBox="0 0 6 4"><path d="M0.5 0.7 L2.9 3.2 L5.3 0.7" fill="none" stroke="#555" stroke-width="0.9"/></svg>
<div class="a" style="left:58.5px;top:183.5px;width:0.5px;height:98.5px;background:#cfcfcf;"></div>
<div class="a" style="left:52px;top:177.5px;width:132px;height:104.5px;overflow:hidden;">
<div class="a" style="left:6.5px;top:5.800000000000011px;width:5px;height:0.5px;background:#cfcfcf"></div>
<div class="a" style="left:19px;top:0.8000000000000114px;width:16px;height:10.5px;background:#ececec"></div>
<div class="a" style="left:11.399999999999999px;top:2.600000000000011px;width:6.2px;height:6.2px;background:#fff;border:0.6px solid #a8a8a8"></div>
<div class="a" style="left:12.900000000000006px;top:4.100000000000011px;width:3.2px;height:3.2px;background:#222"></div>
<span class="t" id="t356" style="top:0.60px;font-size:8.2px;line-height:11px;color:#1a1a1a;left:19.900000000000006px;transform-origin:0 50%;transform:scaleX(0.9339);">(All)</span>
<div class="a" style="left:6.5px;top:16.72px;width:5px;height:0.5px;background:#cfcfcf"></div>
<div class="a" style="left:11.399999999999999px;top:13.52px;width:6.2px;height:6.2px;background:#fff;border:0.6px solid #a8a8a8"></div>
<span class="t" id="t357" style="top:11.52px;font-size:8.2px;line-height:11px;color:#1a1a1a;left:19.900000000000006px;transform-origin:0 50%;transform:scaleX(0.8575);">2011</span>
<div class="a" style="left:6.5px;top:27.640000000000015px;width:5px;height:0.5px;background:#cfcfcf"></div>
<div class="a" style="left:11.399999999999999px;top:24.440000000000015px;width:6.2px;height:6.2px;background:#fff;border:0.6px solid #a8a8a8"></div>
<span class="t" id="t358" style="top:22.44px;font-size:8.2px;line-height:11px;color:#1a1a1a;left:19.900000000000006px;transform-origin:0 50%;transform:scaleX(0.8288);">2012</span>
<div class="a" style="left:6.5px;top:38.56px;width:5px;height:0.5px;background:#cfcfcf"></div>
<div class="a" style="left:11.399999999999999px;top:35.36px;width:6.2px;height:6.2px;background:#fff;border:0.6px solid #a8a8a8"></div>
<svg class="a" style="left:12.200000000000003px;top:36.260000000000005px" width="5" height="5" viewBox="0 0 5 5"><path d="M0.6 2.4 L1.9 3.8 L4.4 0.8" fill="none" stroke="#111" stroke-width="1.15"/></svg>
<span class="t" id="t359" style="top:33.36px;font-size:8.2px;line-height:11px;color:#1a1a1a;left:19.900000000000006px;transform-origin:0 50%;transform:scaleX(0.8288);">2013</span>
<div class="a" style="left:6.5px;top:49.48000000000002px;width:5px;height:0.5px;background:#cfcfcf"></div>
<div class="a" style="left:11.399999999999999px;top:46.280000000000015px;width:6.2px;height:6.2px;background:#fff;border:0.6px solid #a8a8a8"></div>
<svg class="a" style="left:12.200000000000003px;top:47.18000000000002px" width="5" height="5" viewBox="0 0 5 5"><path d="M0.6 2.4 L1.9 3.8 L4.4 0.8" fill="none" stroke="#111" stroke-width="1.15"/></svg>
<span class="t" id="t360" style="top:44.28px;font-size:8.2px;line-height:11px;color:#1a1a1a;left:19.900000000000006px;transform-origin:0 50%;transform:scaleX(0.8288);">2014</span>
<div class="a" style="left:6.5px;top:60.400000000000006px;width:5px;height:0.5px;background:#cfcfcf"></div>
<div class="a" style="left:11.399999999999999px;top:57.2px;width:6.2px;height:6.2px;background:#fff;border:0.6px solid #a8a8a8"></div>
<svg class="a" style="left:12.200000000000003px;top:58.10000000000001px" width="5" height="5" viewBox="0 0 5 5"><path d="M0.6 2.4 L1.9 3.8 L4.4 0.8" fill="none" stroke="#111" stroke-width="1.15"/></svg>
<span class="t" id="t361" style="top:55.20px;font-size:8.2px;line-height:11px;color:#1a1a1a;left:19.900000000000006px;transform-origin:0 50%;transform:scaleX(0.8288);">2015</span>
<div class="a" style="left:6.5px;top:71.32px;width:5px;height:0.5px;background:#cfcfcf"></div>
<div class="a" style="left:11.399999999999999px;top:68.11999999999999px;width:6.2px;height:6.2px;background:#fff;border:0.6px solid #a8a8a8"></div>
<svg class="a" style="left:12.200000000000003px;top:69.02px" width="5" height="5" viewBox="0 0 5 5"><path d="M0.6 2.4 L1.9 3.8 L4.4 0.8" fill="none" stroke="#111" stroke-width="1.15"/></svg>
<span class="t" id="t362" style="top:66.12px;font-size:8.2px;line-height:11px;color:#1a1a1a;left:19.900000000000006px;transform-origin:0 50%;transform:scaleX(0.8288);">2016</span>
<div class="a" style="left:6.5px;top:82.24000000000001px;width:5px;height:0.5px;background:#cfcfcf"></div>
<div class="a" style="left:11.399999999999999px;top:79.04px;width:6.2px;height:6.2px;background:#fff;border:0.6px solid #a8a8a8"></div>
<svg class="a" style="left:12.200000000000003px;top:79.94000000000001px" width="5" height="5" viewBox="0 0 5 5"><path d="M0.6 2.4 L1.9 3.8 L4.4 0.8" fill="none" stroke="#111" stroke-width="1.15"/></svg>
<span class="t" id="t363" style="top:77.04px;font-size:8.2px;line-height:11px;color:#1a1a1a;left:19.900000000000006px;transform-origin:0 50%;transform:scaleX(0.8288);">2017</span>
<div class="a" style="left:6.5px;top:93.16000000000003px;width:5px;height:0.5px;background:#cfcfcf"></div>
<div class="a" style="left:11.399999999999999px;top:89.96000000000002px;width:6.2px;height:6.2px;background:#fff;border:0.6px solid #a8a8a8"></div>
<svg class="a" style="left:12.200000000000003px;top:90.86000000000003px" width="5" height="5" viewBox="0 0 5 5"><path d="M0.6 2.4 L1.9 3.8 L4.4 0.8" fill="none" stroke="#111" stroke-width="1.15"/></svg>
<span class="t" id="t364" style="top:87.96px;font-size:8.2px;line-height:11px;color:#1a1a1a;left:19.900000000000006px;transform-origin:0 50%;transform:scaleX(0.8288);">2018</span>
<div class="a" style="left:6.5px;top:104.08000000000004px;width:5px;height:0.5px;background:#cfcfcf"></div>
<div class="a" style="left:11.399999999999999px;top:100.88000000000004px;width:6.2px;height:6.2px;background:#fff;border:0.6px solid #a8a8a8"></div>
<svg class="a" style="left:12.200000000000003px;top:101.78000000000004px" width="5" height="5" viewBox="0 0 5 5"><path d="M0.6 2.4 L1.9 3.8 L4.4 0.8" fill="none" stroke="#111" stroke-width="1.15"/></svg>
<span class="t" id="t365" style="top:98.88px;font-size:8.2px;line-height:11px;color:#1a1a1a;left:19.900000000000006px;transform-origin:0 50%;transform:scaleX(0.8288);">2019</span>
</div>
<div class="a" style="left:51.2px;top:289.4px;width:8.4px;height:8.4px;background:#fff;border:0.7px solid #8a8a8a;"></div>
<svg class="a" style="left:52.6px;top:291px;" width="6" height="6" viewBox="0 0 6 6"><path d="M0.6 2.8 L2.2 4.5 L5.3 0.8" fill="none" stroke="#555" stroke-width="0.9"/></svg>
<span class="t" id="t366" style="top:288.30px;font-size:7.8px;line-height:11px;color:#6e6e6e;left:63.6px;transform-origin:0 50%;transform:scaleX(0.9661);">Select Multiple Items</span>
<div class="a" style="left:102.2px;top:307.2px;width:43.6px;height:13.4px;background:#e1e1e1;border:1px solid #3c7fb1;"></div>
<span class="t" id="t367" style="top:309.80px;font-size:7.2px;line-height:10px;color:#1a1a1a;left:124px;transform-origin:50% 50%;transform:translateX(-50%);">OK</span>
<div class="a" style="left:152px;top:307.2px;width:42.8px;height:13.4px;background:#e1e1e1;border:0.7px solid #adadad;"></div>
<span class="t" id="t368" style="top:309.80px;font-size:7.2px;line-height:10px;color:#1a1a1a;left:173.3px;transform-origin:50% 50%;transform:translateX(-50%) scaleX(0.8715);">Cancel</span>
<div class="a" style="left:0px;top:486px;width:960px;height:15.4px;background:#e6e6e6;"></div>
<div class="a" style="left:0px;top:485.5px;width:948px;height:0.6px;background:#cfcfcf;"></div>
<svg class="a" style="left:13px;top:491px;" width="4" height="6" viewBox="0 0 4 6"><path d="M3.2 0.3 V5.3 L0.4 2.8 Z" fill="#c2c2c2"/></svg>
<svg class="a" style="left:28px;top:491px;" width="4" height="6" viewBox="0 0 4 6"><path d="M0.4 0.3 V5.3 L3.2 2.8 Z" fill="#c2c2c2"/></svg>
<div class="a" style="left:51.6px;top:486px;width:40.2px;height:14px;background:#fff;"></div>
<div class="a" style="left:51.6px;top:498.3px;width:40.2px;height:1.5px;background:#217346;"></div>
<span class="t" id="t369" style="top:486.90px;font-size:8.3px;line-height:11px;color:#217346;font-weight:bold;left:57.7px;transform-origin:0 50%;transform:scaleX(0.9956);">Sheet2</span>
<span class="t" id="t370" style="top:486.90px;font-size:8.3px;line-height:11px;color:#444;left:98.8px;transform-origin:0 50%;transform:scaleX(0.8703);">TFORDJL</span>
<div class="a" style="left:139px;top:488.5px;width:0.7px;height:10px;background:#b0b0b0;"></div>
<span class="t" id="t371" style="top:486.90px;font-size:8.3px;line-height:11px;color:#444;left:146px;transform-origin:0 50%;transform:scaleX(0.9735);">Sheet1</span>
<div class="a" style="left:178px;top:488.5px;width:0.7px;height:10px;background:#b0b0b0;"></div>
<svg class="a" style="left:195px;top:489px;" width="10" height="10" viewBox="0 0 10 10"><circle cx="5" cy="5" r="4.3" fill="none" stroke="#666" stroke-width="0.8"/><path d="M5 2.7 V7.3 M2.7 5 H7.3" stroke="#666" stroke-width="0.8"/></svg>
<div class="a" style="left:575px;top:491px;width:1px;height:1px;background:#8a8a8a;"></div>
<div class="a" style="left:575px;top:494px;width:1px;height:1px;background:#8a8a8a;"></div>
<div class="a" style="left:575px;top:497px;width:1px;height:1px;background:#8a8a8a;"></div>
<div class="a" style="left:584px;top:489px;width:8.5px;height:10px;background:#fff;border:0.5px solid #c8c8c8;"></div>
<svg class="a" style="left:586.3px;top:491.6px;" width="4" height="5" viewBox="0 0 4 5"><path d="M3 0 V4.6 L0.2 2.3 Z" fill="#444"/></svg>
<div class="a" style="left:593.6px;top:489px;width:320.6px;height:10px;background:#fff;border:0.5px solid #d0d0d0;"></div>
<div class="a" style="left:938.5px;top:489px;width:9px;height:10px;background:#fff;border:0.5px solid #c8c8c8;"></div>
<svg class="a" style="left:941.5px;top:491.6px;" width="4" height="5" viewBox="0 0 4 5"><path d="M0.5 0 V4.6 L3.3 2.3 Z" fill="#444"/></svg>
<div class="a" style="left:0px;top:501.4px;width:960px;height:13.8px;background:#f3f3f3;"></div>
<div class="a" style="left:774.5px;top:501.4px;width:24.5px;height:13.8px;background:#c8c8c8;"></div>
<svg class="a" style="left:781.5px;top:503.5px;" width="10" height="9" viewBox="0 0 10 9"><g fill="none" stroke="#555" stroke-width="0.8"><rect x="0.5" y="0.5" width="8.6" height="7.6"/><path d="M0.5 3 H9 M0.5 5.6 H9 M3.4 0.5 V8 M6.2 0.5 V8"/></g></svg>
<svg class="a" style="left:806.5px;top:503.5px;" width="10" height="9" viewBox="0 0 10 9"><g fill="none" stroke="#666" stroke-width="0.8"><rect x="0.5" y="0.5" width="8.6" height="7.6"/><rect x="2.6" y="2.4" width="4.4" height="3.8"/></g></svg>
<svg class="a" style="left:832px;top:503.5px;" width="10" height="9" viewBox="0 0 10 9"><g fill="none" stroke="#666" stroke-width="0.8"><rect x="0.5" y="0.5" width="8.6" height="7.6"/><path d="M0.5 5 H4.5 V0.5"/></g></svg>
<div class="a" style="left:852.5px;top:507.5px;width:5px;height:0.8px;background:#555;"></div>
<div class="a" style="left:861.5px;top:507.6px;width:61px;height:0.7px;background:#9a9a9a;"></div>
<div class="a" style="left:890.4px;top:503.8px;width:3.2px;height:8.6px;background:#505050;"></div>
<div class="a" style="left:925.5px;top:507.5px;width:5px;height:0.8px;background:#555;"></div>
<div class="a" style="left:927.6px;top:505.4px;width:0.8px;height:5px;background:#555;"></div>
<span class="t" id="t372" style="top:503.30px;font-size:7px;line-height:10px;color:#3a3a3a;left:939.6px;transform-origin:0 50%;transform:scaleX(0.8600);">100%</span>
<div class="a" style="left:0px;top:515.2px;width:960px;height:25px;background:#1d1d1f;"></div>
<svg class="a" style="left:9.9px;top:522.2px;" width="10.6" height="10.6" viewBox="0 0 12 12"><g fill="#fff"><path d="M0 1.7 L5.2 1 V5.6 H0 Z"/><path d="M6 0.9 L12 0 V5.6 H6 Z"/><path d="M0 6.4 H5.2 V11 L0 10.3 Z"/><path d="M6 6.4 H12 V12 L6 11.1 Z"/></g></svg>
<div class="a" style="left:30.5px;top:516px;width:179px;height:24px;background:#3a3a3c;"></div>
<svg class="a" style="left:37px;top:521.5px;" width="11" height="11" viewBox="0 0 11 11"><circle cx="6.6" cy="4.2" r="3.4" fill="none" stroke="#fff" stroke-width="1"/><path d="M4.3 6.7 L0.6 10.4" stroke="#fff" stroke-width="1.1"/></svg>
<span class="t" id="t373" style="top:522.10px;font-size:8.4px;line-height:11px;color:#e9e9e9;left:55.4px;transform-origin:0 50%;transform:scaleX(1.1022);">Type here to search</span>
<svg class="a" style="left:162px;top:520px;" width="47" height="15" viewBox="0 0 47 15"><path d="M1 8.5 L11 2.5 L22 9 L12 14 Z" fill="#3f97d6"/><path d="M1 8.5 L12 14 L12 12 L3 7.3 Z" fill="#2a76b4"/><ellipse cx="20" cy="8" rx="3" ry="3.6" fill="#6dbbee"/><ellipse cx="20" cy="8" rx="1.4" ry="1.8" fill="#2a76b4"/>
<path d="M27 7.5 H44 C44 12 41 14.5 35.5 14.5 C30 14.5 27 12 27 7.5 Z" fill="#e48a69"/><path d="M27 7.5 H44 C44 9 43 10 41 10.5 H30 C28 10 27 9 27 7.5 Z" fill="#f0a585"/>
<circle cx="31" cy="5" r="3" fill="#5aa846"/><circle cx="36" cy="3.8" r="3.2" fill="#79c257"/><circle cx="41" cy="5.2" r="2.8" fill="#4c9a3d"/><circle cx="34" cy="6" r="1.5" fill="#e44d3a"/><circle cx="38.5" cy="6.3" r="1.4" fill="#f3b73c"/></svg>
<svg class="a" style="left:219.5px;top:520.5px;" width="15" height="14.5" viewBox="0 0 15 14.5"><path d="M4.5 3.6 V2.6 C4.5 1 5.6 0.5 7.4 0.5 C9.2 0.5 10.3 1 10.3 2.6 V3.6" fill="none" stroke="#5fb6ee" stroke-width="1"/><rect x="0.3" y="3.2" width="14.2" height="10.8" rx="2" fill="#f4f4f4"/><rect x="4.6" y="5.8" width="2.5" height="2.5" fill="#f25022"/><rect x="7.7" y="5.8" width="2.5" height="2.5" fill="#7fba00"/><rect x="4.6" y="8.9" width="2.5" height="2.5" fill="#00a4ef"/><rect x="7.7" y="8.9" width="2.5" height="2.5" fill="#ffb900"/></svg>
<svg class="a" style="left:250.5px;top:520.5px;" width="15" height="13" viewBox="0 0 15 13"><path d="M0 1.5 C0 0.8 0.4 0.5 1 0.5 H5 L6.4 2 H14 C14.6 2 15 2.4 15 3 V11 H0 Z" fill="#e8b03c"/><path d="M0 4 H15 V11.4 C15 12 14.6 12.3 14 12.3 H1 C0.4 12.3 0 12 0 11.4 Z" fill="#fbd667"/><path d="M3.4 8.2 H11.6 V12.3 H9.6 V10 H5.4 V12.3 H3.4 Z" fill="#3f8fd4"/></svg>
<svg class="a" style="left:281px;top:520px;" width="16" height="16" viewBox="0 0 16 16"><circle cx="8" cy="8" r="7.5" fill="#db4437"/><path d="M8 8 L1.5 4.3 A7.5 7.5 0 0 0 6.7 15.4 L10.5 9.4 Z" fill="#0f9d58"/><path d="M8 8 L14.9 5 A7.5 7.5 0 0 1 6.7 15.4 L10.5 9.5 Z" fill="#ffcd40"/><path d="M1.5 4.3 A7.5 7.5 0 0 1 14.9 5 H8 Z" fill="#db4437"/><circle cx="8" cy="8" r="3.5" fill="#fff"/><circle cx="8" cy="8" r="2.7" fill="#4285f4"/></svg>
<div class="a" style="left:312.5px;top:520.3px;width:14.5px;height:13.7px;background:#001e36;border:1px solid #31a8ff;border-radius:1.5px;"></div>
<span class="t" id="t374" style="top:521.70px;font-size:8px;line-height:11px;color:#31a8ff;left:319.8px;transform-origin:50% 50%;transform:translateX(-50%);">Ps</span>
<div class="a" style="left:344px;top:520.3px;width:14.5px;height:13.7px;background:#330000;border:1px solid #ff7c00;border-radius:1.5px;"></div>
<span class="t" id="t375" style="top:521.70px;font-size:8px;line-height:11px;color:#ff9a00;left:351.3px;transform-origin:50% 50%;transform:translateX(-50%);">Ai</span>
<svg class="a" style="left:374.5px;top:520px;" width="15" height="14.5" viewBox="0 0 15 14.5"><rect x="0" y="0" width="15" height="14.5" rx="3" fill="#eeeeee"/><path d="M9.5 9.5 C5 10.5 2.6 8.6 3 6.2 C3.4 3.8 6.5 2.6 9.5 3.2 C12.3 3.8 12.6 6.6 10.4 7.6 C8.6 8.4 7 7.8 7.4 6.6 M8.7 9.6 C8.4 10.6 8.6 11.6 9.4 12" fill="none" stroke="#2b2b2b" stroke-width="1.6" stroke-linecap="round"/></svg>
<svg class="a" style="left:406px;top:519.5px;" width="15" height="15" viewBox="0 0 15 15"><circle cx="7.5" cy="7.5" r="7.5" fill="#1ed760"/><g fill="none" stroke="#121212" stroke-linecap="round"><path d="M3.3 5.4 C6 4.5 9.4 4.7 11.9 6.1" stroke-width="1.5"/><path d="M3.8 7.9 C6.1 7.2 8.9 7.4 11 8.6" stroke-width="1.25"/><path d="M4.3 10.2 C6.1 9.7 8.3 9.8 10 10.8" stroke-width="1.05"/></g></svg>
<svg class="a" style="left:436px;top:520px;" width="16" height="14.5" viewBox="0 0 16 14.5"><rect x="0" y="0" width="16" height="14.5" rx="3" fill="#e3e3e3"/><g fill="none" stroke="#8a8a8a" stroke-width="1.3"><ellipse cx="6.7" cy="7.6" rx="3.6" ry="3.3"/><ellipse cx="10" cy="6.9" rx="3" ry="2.8"/></g></svg>
<div class="a" style="left:460px;top:515.2px;width:31px;height:24.8px;background:#4a4a4c;"></div>
<svg class="a" style="left:467px;top:520px;" width="16" height="14.5" viewBox="0 0 16 14.5"><rect x="4" y="0" width="12" height="14.5" rx="1" fill="#21a366"/><rect x="10" y="0" width="6" height="3.6" fill="#33c481"/><rect x="4" y="3.6" width="6" height="3.6" fill="#107c41"/><rect x="10" y="3.6" width="6" height="3.6" fill="#21a366"/><rect x="4" y="7.2" width="6" height="3.7" fill="#185c37"/><rect x="10" y="7.2" width="6" height="3.7" fill="#107c41"/><rect x="4" y="10.9" width="12" height="3.6" fill="#185c37"/><rect x="0" y="3.2" width="8.4" height="8.4" rx="1" fill="#107c41"/></svg>
<span class="t" id="t376" style="top:523.50px;font-size:6px;line-height:8px;color:#fff;font-weight:bold;left:471.2px;transform-origin:50% 50%;transform:translateX(-50%);">X</span>
<svg class="a" style="left:498px;top:520px;" width="16" height="14.5" viewBox="0 0 16 14.5"><rect x="4" y="0" width="12" height="14.5" rx="1" fill="#2b7cd3"/><rect x="4" y="0" width="12" height="3.6" fill="#41a5ee"/><rect x="4" y="3.6" width="12" height="3.6" fill="#2b7cd3"/><rect x="4" y="7.2" width="12" height="3.7" fill="#185abd"/><rect x="4" y="10.9" width="12" height="3.6" fill="#103f91"/><rect x="0" y="3.2" width="8.4" height="8.4" rx="1" fill="#185abd"/></svg>
<span class="t" id="t377" style="top:523.50px;font-size:5.6px;line-height:8px;color:#fff;font-weight:bold;left:502.2px;transform-origin:50% 50%;transform:translateX(-50%);">W</span>
<div class="a" style="left:245px;top:538.6px;width:26px;height:1.4px;background:#76b9ed;"></div>
<div class="a" style="left:276px;top:538.6px;width:25.5px;height:1.4px;background:#76b9ed;"></div>
<div class="a" style="left:369px;top:538.6px;width:25.69999999999999px;height:1.4px;background:#76b9ed;"></div>
<div class="a" style="left:431px;top:538.6px;width:25.600000000000023px;height:1.4px;background:#76b9ed;"></div>
<div class="a" style="left:460px;top:538.6px;width:31px;height:1.4px;background:#76b9ed;"></div>
<div class="a" style="left:493px;top:538.6px;width:25.5px;height:1.4px;background:#76b9ed;"></div>
<svg class="a" style="left:854px;top:524px;" width="9" height="6" viewBox="0 0 9 6"><path d="M0.7 5 L4.3 1 L7.9 5" fill="none" stroke="#fff" stroke-width="0.9"/></svg>
<svg class="a" style="left:868px;top:522.5px;" width="12" height="11" viewBox="0 0 12 11"><g fill="none" stroke="#fff" stroke-width="0.9"><path d="M2.5 0.6 H11 V6.8 H5"/><path d="M0.5 5.2 H4 V9.8 H0.5 Z M2.2 9.8 V10.6"/><path d="M6.8 6.8 V8.6 M5.4 8.8 H8.4"/></g></svg>
<span class="t" id="t378" style="top:516.40px;font-size:7.7px;line-height:11px;color:#fff;left:903.9px;transform-origin:50% 50%;transform:translateX(-50%) scaleX(0.8987);">18:29</span>
<span class="t" id="t379" style="top:527.70px;font-size:7.7px;line-height:11px;color:#fff;left:904px;transform-origin:50% 50%;transform:translateX(-50%) scaleX(0.9926);">06/01/2024</span>
<svg class="a" style="left:933.5px;top:522px;" width="11.6" height="10.8" viewBox="0 0 13 12"><path d="M0.8 0.8 H12 V8.6 H7 L4.4 11 V8.6 H0.8 Z" fill="none" stroke="#fff" stroke-width="1"/></svg>
</div></body></html>
